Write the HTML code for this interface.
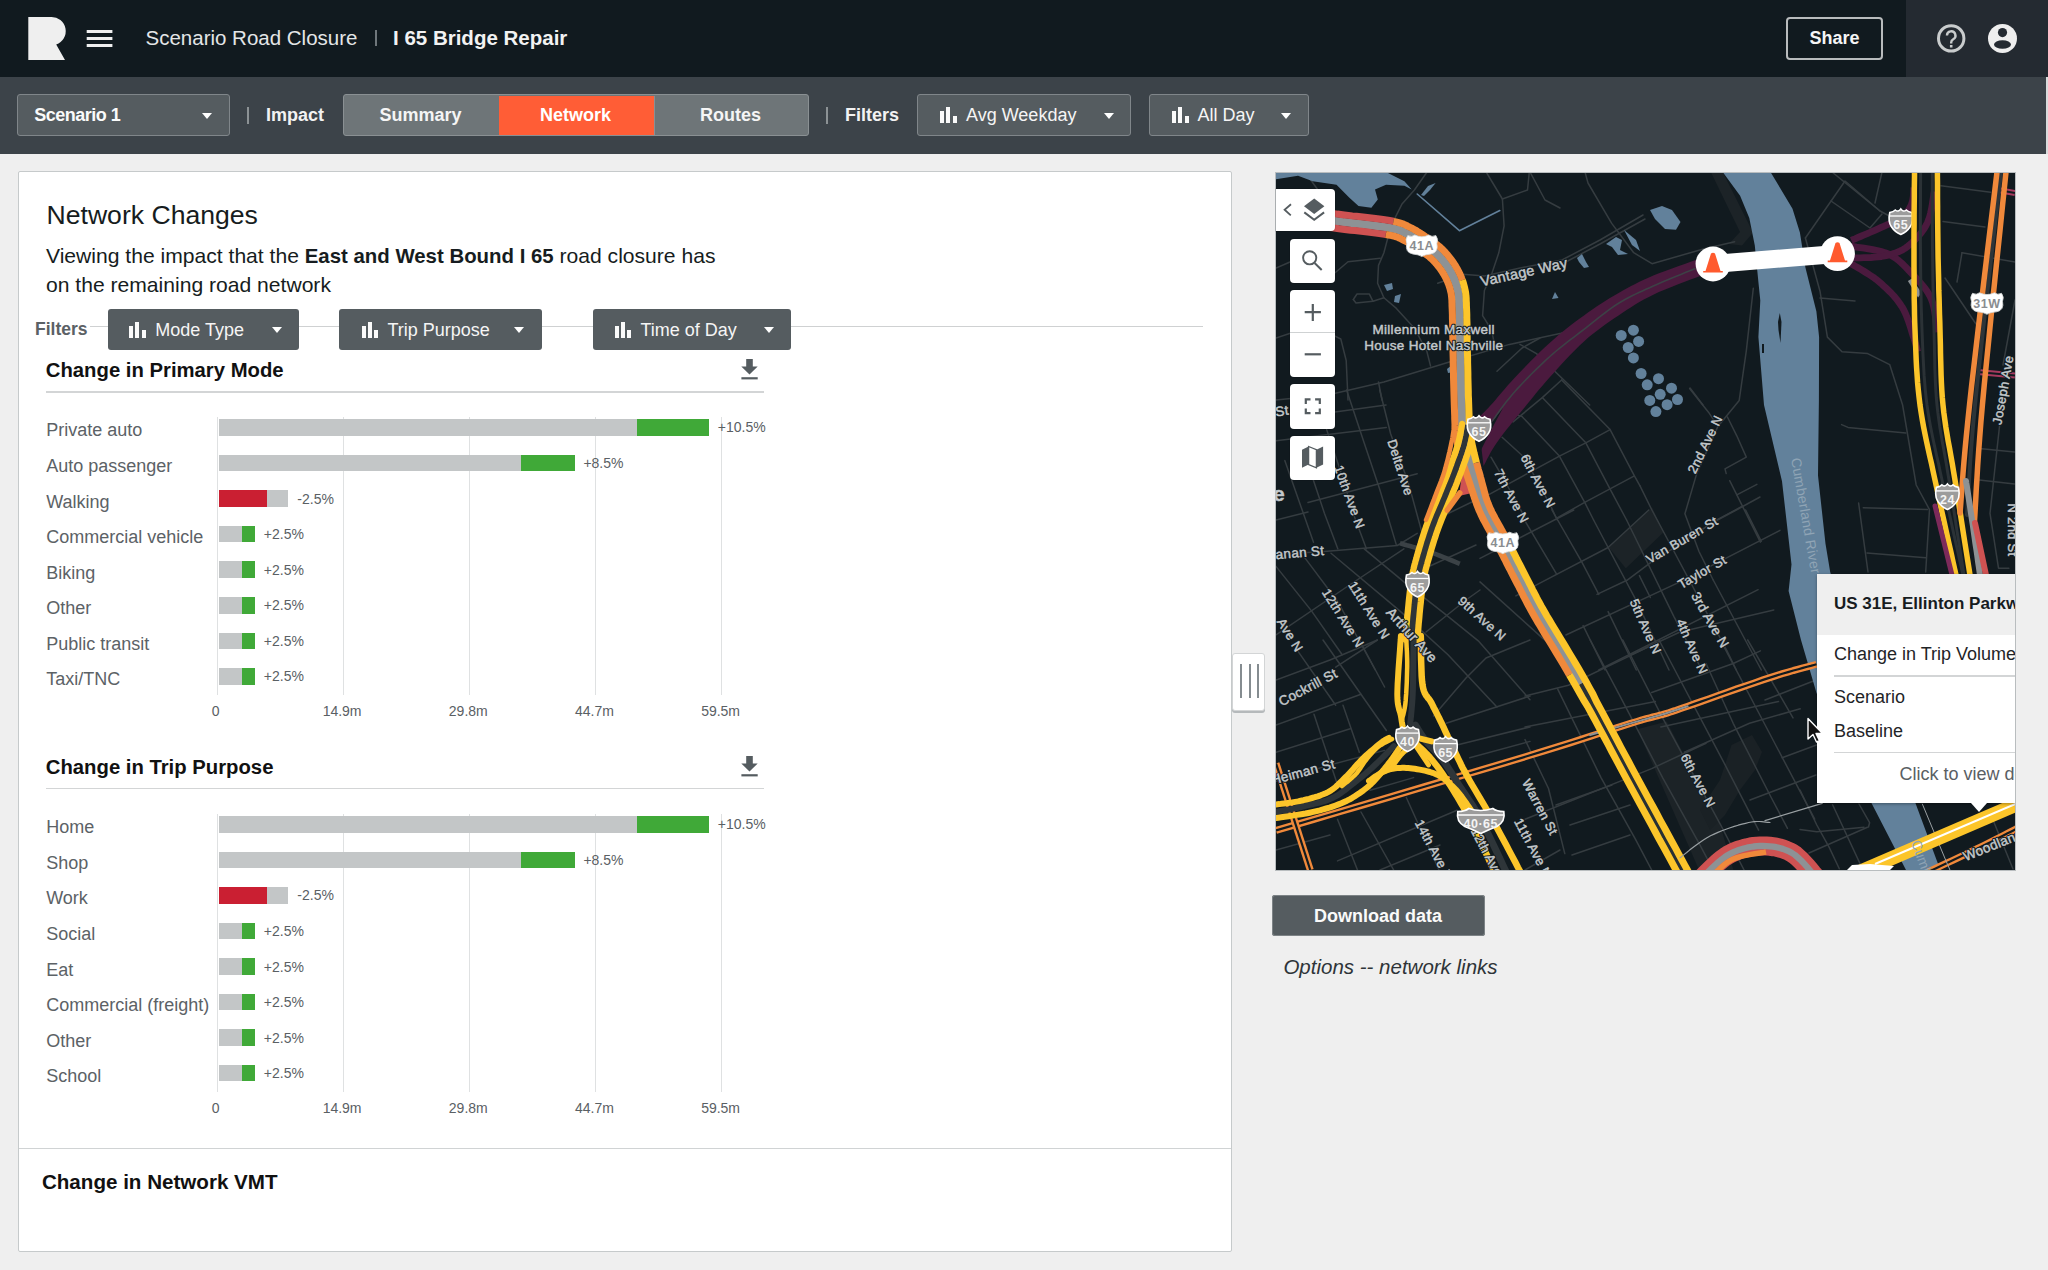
<!DOCTYPE html>
<html><head><meta charset="utf-8"><style>
html,body{margin:0;padding:0;}
body{width:2048px;height:1270px;overflow:hidden;background:#efefef;position:relative;font-family:"Liberation Sans", sans-serif;}
</style></head><body>
<div style="position:absolute;left:0.0px;top:0.0px;width:2048.0px;height:77.0px;background:#111a1f;"></div><div style="position:absolute;left:1906.0px;top:0.0px;width:142.0px;height:77.0px;background:#242a31;"></div><svg style="position:absolute;left:0;top:0" width="120" height="77"><path d="M28.3 17 H51 A14.2 14.2 0 0 1 56.2 44.6 L65 60 H28.3 Z" fill="#efefef"/><rect x="86.7" y="30" width="25.7" height="3" fill="#efefef"/><rect x="86.7" y="37" width="25.7" height="3" fill="#efefef"/><rect x="86.7" y="44" width="25.7" height="3" fill="#efefef"/></svg><div style="position:absolute;top:28.0px;font-size:20.5px;line-height:20.5px;color:#e4e6e7;font-weight:400;white-space:nowrap;left:145.5px;">Scenario Road Closure</div><div style="position:absolute;left:375.0px;top:30.0px;width:1.6px;height:16.0px;background:#6f777b;"></div><div style="position:absolute;top:28.0px;font-size:20.5px;line-height:20.5px;color:#f2f2f2;font-weight:700;white-space:nowrap;left:393.0px;">I 65 Bridge Repair</div><div style="position:absolute;left:1786.3px;top:17.0px;width:96.7px;height:42.8px;background:transparent;box-sizing:border-box;border:2px solid #b9bcbd;border-radius:4px;"></div><div style="position:absolute;top:29.3px;font-size:18px;line-height:18px;color:#f5f5f5;font-weight:700;white-space:nowrap;left:1534.6px;width:600px;text-align:center;">Share</div><svg style="position:absolute;left:1930;top:17px" width="100" height="44" viewBox="1930 17 100 44"><circle cx="1951.2" cy="38.4" r="12.7" fill="none" stroke="#c9cccd" stroke-width="3"/><g transform="translate(1951.2 39.2) scale(0.85) translate(-1951.2 -38.5)"><path d="M1946.2 34.2 A5 5 0 1 1 1953.6 38.6 Q1951.2 40 1951.2 42.5 V43.5" fill="none" stroke="#c9cccd" stroke-width="2.8"/><rect x="1949.7" y="45.3" width="3" height="3" fill="#c9cccd"/></g><circle cx="2002.5" cy="38.4" r="14.5" fill="#eeeeee"/><circle cx="2002.5" cy="32.55" r="4.6" fill="#242a31"/><ellipse cx="2002.5" cy="44.45" rx="8.5" ry="4.3" fill="#242a31"/></svg><div style="position:absolute;left:0.0px;top:77.0px;width:2048.0px;height:76.5px;background:#3c4349;"></div><div style="position:absolute;left:2046.3px;top:77.0px;width:1.7px;height:76.5px;background:#d9dbdc;"></div><div style="position:absolute;left:17.0px;top:94.0px;width:213.0px;height:42.2px;background:#555c60;box-sizing:border-box;border:1.5px solid #80868a;border-radius:3px;"></div><div style="position:absolute;top:106.1px;font-size:18px;line-height:18px;color:#fafafa;font-weight:700;white-space:nowrap;left:34.3px;letter-spacing:-0.5px;">Scenario 1</div><div style="position:absolute;left:201.7px;top:112.6px;width:0;height:0;border-left:5.75px solid transparent;border-right:5.75px solid transparent;border-top:6.2px solid #fff;"></div><div style="position:absolute;left:247.0px;top:106.7px;width:1.8px;height:17.0px;background:#8c9295;"></div><div style="position:absolute;top:106.1px;font-size:18px;line-height:18px;color:#f2f2f2;font-weight:700;white-space:nowrap;left:266.0px;">Impact</div><div style="position:absolute;left:342.7px;top:94.3px;width:466.3px;height:42.0px;background:#6e7578;box-sizing:border-box;border:1.5px solid #8a9093;border-radius:3px;"></div><div style="position:absolute;left:498.5px;top:95.5px;width:155.0px;height:39.6px;background:#ff5d36;"></div><div style="position:absolute;left:653.5px;top:95.5px;width:1.5px;height:39.6px;background:#8a9093;"></div><div style="position:absolute;top:106.3px;font-size:18px;line-height:18px;color:#f5f5f5;font-weight:700;white-space:nowrap;left:120.6px;width:600px;text-align:center;">Summary</div><div style="position:absolute;top:106.3px;font-size:18px;line-height:18px;color:#ffffff;font-weight:700;white-space:nowrap;left:275.6px;width:600px;text-align:center;">Network</div><div style="position:absolute;top:106.3px;font-size:18px;line-height:18px;color:#f5f5f5;font-weight:700;white-space:nowrap;left:430.6px;width:600px;text-align:center;">Routes</div><div style="position:absolute;left:826.0px;top:106.7px;width:1.8px;height:17.0px;background:#8c9295;"></div><div style="position:absolute;top:106.1px;font-size:18px;line-height:18px;color:#f2f2f2;font-weight:700;white-space:nowrap;left:845.0px;">Filters</div><div style="position:absolute;left:917.4px;top:94.3px;width:214.1px;height:42.0px;background:#555c60;box-sizing:border-box;border:1.5px solid #80868a;border-radius:3px;"></div><div style="position:absolute;left:940.0px;top:111.3px;width:4.0px;height:12.0px;background:#fafafa;"></div><div style="position:absolute;left:946.0px;top:107.3px;width:4.0px;height:16.0px;background:#fafafa;"></div><div style="position:absolute;left:952.5px;top:115.8px;width:4.0px;height:7.5px;background:#fafafa;"></div><div style="position:absolute;top:106.4px;font-size:18px;line-height:18px;color:#f5f5f5;font-weight:400;white-space:nowrap;left:966.0px;">Avg Weekday</div><div style="position:absolute;left:1103.5px;top:112.6px;width:0;height:0;border-left:5.75px solid transparent;border-right:5.75px solid transparent;border-top:6.2px solid #fff;"></div><div style="position:absolute;left:1149.3px;top:94.3px;width:160.0px;height:42.0px;background:#555c60;box-sizing:border-box;border:1.5px solid #80868a;border-radius:3px;"></div><div style="position:absolute;left:1172.0px;top:111.3px;width:4.0px;height:12.0px;background:#fafafa;"></div><div style="position:absolute;left:1178.0px;top:107.3px;width:4.0px;height:16.0px;background:#fafafa;"></div><div style="position:absolute;left:1184.5px;top:115.8px;width:4.0px;height:7.5px;background:#fafafa;"></div><div style="position:absolute;top:106.4px;font-size:18px;line-height:18px;color:#f5f5f5;font-weight:400;white-space:nowrap;left:1197.4px;">All Day</div><div style="position:absolute;left:1280.8px;top:112.6px;width:0;height:0;border-left:5.75px solid transparent;border-right:5.75px solid transparent;border-top:6.2px solid #fff;"></div><div style="position:absolute;left:17.5px;top:171.3px;width:1214.0px;height:1081.0px;background:#ffffff;box-sizing:border-box;border:1px solid #c6cacb;border-radius:2px;"></div><div style="position:absolute;top:202.1px;font-size:26.6px;line-height:26.6px;color:#161c20;font-weight:400;white-space:nowrap;left:46.5px;">Network Changes</div><div style="position:absolute;top:245.2px;font-size:21.1px;line-height:21.1px;color:#161c20;font-weight:400;white-space:nowrap;left:46.0px;">Viewing the impact that the <b style="font-size:20.4px">East and West Bound I 65</b> road closure has</div><div style="position:absolute;top:273.6px;font-size:21.1px;line-height:21.1px;color:#161c20;font-weight:400;white-space:nowrap;left:46.0px;">on the remaining road network</div><div style="position:absolute;left:90.0px;top:325.6px;width:1113.0px;height:1.5px;background:#cfd1d2;"></div><div style="position:absolute;top:320.8px;font-size:17.5px;line-height:17.5px;color:#5b6165;font-weight:700;white-space:nowrap;left:35.0px;">Filters</div><div style="position:absolute;left:107.6px;top:309.4px;width:191.4px;height:41.0px;background:#555c60;border-radius:3px;"></div><div style="position:absolute;left:129.0px;top:325.8px;width:4.0px;height:12.0px;background:#fafafa;"></div><div style="position:absolute;left:135.0px;top:321.8px;width:4.0px;height:16.0px;background:#fafafa;"></div><div style="position:absolute;left:141.5px;top:330.3px;width:4.0px;height:7.5px;background:#fafafa;"></div><div style="position:absolute;top:321.0px;font-size:18px;line-height:18px;color:#f5f5f5;font-weight:400;white-space:nowrap;left:155.3px;">Mode Type</div><div style="position:absolute;left:271.9px;top:327.0px;width:0;height:0;border-left:5.75px solid transparent;border-right:5.75px solid transparent;border-top:6.2px solid #fff;"></div><div style="position:absolute;left:339.0px;top:309.4px;width:203.4px;height:41.0px;background:#555c60;border-radius:3px;"></div><div style="position:absolute;left:361.5px;top:325.8px;width:4.0px;height:12.0px;background:#fafafa;"></div><div style="position:absolute;left:367.5px;top:321.8px;width:4.0px;height:16.0px;background:#fafafa;"></div><div style="position:absolute;left:374.0px;top:330.3px;width:4.0px;height:7.5px;background:#fafafa;"></div><div style="position:absolute;top:321.0px;font-size:18px;line-height:18px;color:#f5f5f5;font-weight:400;white-space:nowrap;left:387.5px;">Trip Purpose</div><div style="position:absolute;left:514.2px;top:327.0px;width:0;height:0;border-left:5.75px solid transparent;border-right:5.75px solid transparent;border-top:6.2px solid #fff;"></div><div style="position:absolute;left:592.5px;top:309.4px;width:198.9px;height:41.0px;background:#555c60;border-radius:3px;"></div><div style="position:absolute;left:614.5px;top:325.8px;width:4.0px;height:12.0px;background:#fafafa;"></div><div style="position:absolute;left:620.5px;top:321.8px;width:4.0px;height:16.0px;background:#fafafa;"></div><div style="position:absolute;left:627.0px;top:330.3px;width:4.0px;height:7.5px;background:#fafafa;"></div><div style="position:absolute;top:321.0px;font-size:18px;line-height:18px;color:#f5f5f5;font-weight:400;white-space:nowrap;left:640.5px;">Time of Day</div><div style="position:absolute;left:763.6px;top:327.0px;width:0;height:0;border-left:5.75px solid transparent;border-right:5.75px solid transparent;border-top:6.2px solid #fff;"></div><div style="position:absolute;top:359.9px;font-size:20.3px;line-height:20.3px;color:#111111;font-weight:700;white-space:nowrap;left:45.8px;">Change in Primary Mode</div><svg style="position:absolute;left:738px;top:355px" width="24" height="28" viewBox="738 355 24 28"><path d="M746.2 359 H752.8 V366.5 H757.7 L749.5 374.5 L741.3 366.5 H746.2 Z" fill="#555c60"/><rect x="741.4" y="377.2" width="16.3" height="2.2" fill="#555c60"/></svg><div style="position:absolute;left:45.6px;top:391.0px;width:718.4px;height:1.6px;background:#d3d5d6;"></div><div style="position:absolute;left:216.6px;top:416.6px;width:1.2px;height:278.0px;background:#dfe1e2;"></div><div style="position:absolute;left:342.7px;top:416.6px;width:1.2px;height:278.0px;background:#dfe1e2;"></div><div style="position:absolute;left:468.8px;top:416.6px;width:1.2px;height:278.0px;background:#dfe1e2;"></div><div style="position:absolute;left:594.9px;top:416.6px;width:1.2px;height:278.0px;background:#dfe1e2;"></div><div style="position:absolute;left:721.0px;top:416.6px;width:1.2px;height:278.0px;background:#dfe1e2;"></div><div style="position:absolute;top:704.3px;font-size:14px;line-height:14px;color:#5a6064;font-weight:400;white-space:nowrap;left:-84.3px;width:600px;text-align:center;">0</div><div style="position:absolute;top:704.3px;font-size:14px;line-height:14px;color:#5a6064;font-weight:400;white-space:nowrap;left:42.1px;width:600px;text-align:center;">14.9m</div><div style="position:absolute;top:704.3px;font-size:14px;line-height:14px;color:#5a6064;font-weight:400;white-space:nowrap;left:168.3px;width:600px;text-align:center;">29.8m</div><div style="position:absolute;top:704.3px;font-size:14px;line-height:14px;color:#5a6064;font-weight:400;white-space:nowrap;left:294.5px;width:600px;text-align:center;">44.7m</div><div style="position:absolute;top:704.3px;font-size:14px;line-height:14px;color:#5a6064;font-weight:400;white-space:nowrap;left:420.6px;width:600px;text-align:center;">59.5m</div><div style="position:absolute;top:421.4px;font-size:18px;line-height:18px;color:#5c6266;font-weight:400;white-space:nowrap;left:46.2px;">Private auto</div><div style="position:absolute;left:218.5px;top:419.2px;width:418.2px;height:16.6px;background:#c3c6c7;"></div><div style="position:absolute;left:636.7px;top:419.2px;width:72.3px;height:16.6px;background:#40a938;"></div><div style="position:absolute;top:420.4px;font-size:14px;line-height:14px;color:#5a6064;font-weight:400;white-space:nowrap;left:717.8px;">+10.5%</div><div style="position:absolute;top:456.9px;font-size:18px;line-height:18px;color:#5c6266;font-weight:400;white-space:nowrap;left:46.2px;">Auto passenger</div><div style="position:absolute;left:218.5px;top:454.8px;width:302.5px;height:16.6px;background:#c3c6c7;"></div><div style="position:absolute;left:521.0px;top:454.8px;width:53.5px;height:16.6px;background:#40a938;"></div><div style="position:absolute;top:456.0px;font-size:14px;line-height:14px;color:#5a6064;font-weight:400;white-space:nowrap;left:583.4px;">+8.5%</div><div style="position:absolute;top:492.5px;font-size:18px;line-height:18px;color:#5c6266;font-weight:400;white-space:nowrap;left:46.2px;">Walking</div><div style="position:absolute;left:218.5px;top:490.3px;width:48.3px;height:16.6px;background:#ca1f32;"></div><div style="position:absolute;left:266.8px;top:490.3px;width:21.6px;height:16.6px;background:#c3c6c7;"></div><div style="position:absolute;top:491.5px;font-size:14px;line-height:14px;color:#5a6064;font-weight:400;white-space:nowrap;left:297.3px;">-2.5%</div><div style="position:absolute;top:528.0px;font-size:18px;line-height:18px;color:#5c6266;font-weight:400;white-space:nowrap;left:46.2px;">Commercial vehicle</div><div style="position:absolute;left:218.5px;top:525.9px;width:23.7px;height:16.6px;background:#c3c6c7;"></div><div style="position:absolute;left:242.2px;top:525.9px;width:12.4px;height:16.6px;background:#40a938;"></div><div style="position:absolute;top:527.1px;font-size:14px;line-height:14px;color:#5a6064;font-weight:400;white-space:nowrap;left:263.8px;">+2.5%</div><div style="position:absolute;top:563.6px;font-size:18px;line-height:18px;color:#5c6266;font-weight:400;white-space:nowrap;left:46.2px;">Biking</div><div style="position:absolute;left:218.5px;top:561.4px;width:23.7px;height:16.6px;background:#c3c6c7;"></div><div style="position:absolute;left:242.2px;top:561.4px;width:12.4px;height:16.6px;background:#40a938;"></div><div style="position:absolute;top:562.6px;font-size:14px;line-height:14px;color:#5a6064;font-weight:400;white-space:nowrap;left:263.8px;">+2.5%</div><div style="position:absolute;top:599.1px;font-size:18px;line-height:18px;color:#5c6266;font-weight:400;white-space:nowrap;left:46.2px;">Other</div><div style="position:absolute;left:218.5px;top:597.0px;width:23.7px;height:16.6px;background:#c3c6c7;"></div><div style="position:absolute;left:242.2px;top:597.0px;width:12.4px;height:16.6px;background:#40a938;"></div><div style="position:absolute;top:598.2px;font-size:14px;line-height:14px;color:#5a6064;font-weight:400;white-space:nowrap;left:263.8px;">+2.5%</div><div style="position:absolute;top:634.7px;font-size:18px;line-height:18px;color:#5c6266;font-weight:400;white-space:nowrap;left:46.2px;">Public transit</div><div style="position:absolute;left:218.5px;top:632.5px;width:23.7px;height:16.6px;background:#c3c6c7;"></div><div style="position:absolute;left:242.2px;top:632.5px;width:12.4px;height:16.6px;background:#40a938;"></div><div style="position:absolute;top:633.7px;font-size:14px;line-height:14px;color:#5a6064;font-weight:400;white-space:nowrap;left:263.8px;">+2.5%</div><div style="position:absolute;top:670.2px;font-size:18px;line-height:18px;color:#5c6266;font-weight:400;white-space:nowrap;left:46.2px;">Taxi/TNC</div><div style="position:absolute;left:218.5px;top:668.0px;width:23.7px;height:16.6px;background:#c3c6c7;"></div><div style="position:absolute;left:242.2px;top:668.0px;width:12.4px;height:16.6px;background:#40a938;"></div><div style="position:absolute;top:669.3px;font-size:14px;line-height:14px;color:#5a6064;font-weight:400;white-space:nowrap;left:263.8px;">+2.5%</div><div style="position:absolute;top:756.8px;font-size:20.3px;line-height:20.3px;color:#111111;font-weight:700;white-space:nowrap;left:45.8px;">Change in Trip Purpose</div><svg style="position:absolute;left:738px;top:751.9px" width="24" height="28" viewBox="738 751.9 24 28"><path d="M746.2 755.9 H752.8 V763.4 H757.7 L749.5 771.4 L741.3 763.4 H746.2 Z" fill="#555c60"/><rect x="741.4" y="774.0999999999999" width="16.3" height="2.2" fill="#555c60"/></svg><div style="position:absolute;left:45.6px;top:787.9px;width:718.4px;height:1.6px;background:#d3d5d6;"></div><div style="position:absolute;left:216.6px;top:813.5px;width:1.2px;height:278.0px;background:#dfe1e2;"></div><div style="position:absolute;left:342.7px;top:813.5px;width:1.2px;height:278.0px;background:#dfe1e2;"></div><div style="position:absolute;left:468.8px;top:813.5px;width:1.2px;height:278.0px;background:#dfe1e2;"></div><div style="position:absolute;left:594.9px;top:813.5px;width:1.2px;height:278.0px;background:#dfe1e2;"></div><div style="position:absolute;left:721.0px;top:813.5px;width:1.2px;height:278.0px;background:#dfe1e2;"></div><div style="position:absolute;top:1101.2px;font-size:14px;line-height:14px;color:#5a6064;font-weight:400;white-space:nowrap;left:-84.3px;width:600px;text-align:center;">0</div><div style="position:absolute;top:1101.2px;font-size:14px;line-height:14px;color:#5a6064;font-weight:400;white-space:nowrap;left:42.1px;width:600px;text-align:center;">14.9m</div><div style="position:absolute;top:1101.2px;font-size:14px;line-height:14px;color:#5a6064;font-weight:400;white-space:nowrap;left:168.3px;width:600px;text-align:center;">29.8m</div><div style="position:absolute;top:1101.2px;font-size:14px;line-height:14px;color:#5a6064;font-weight:400;white-space:nowrap;left:294.5px;width:600px;text-align:center;">44.7m</div><div style="position:absolute;top:1101.2px;font-size:14px;line-height:14px;color:#5a6064;font-weight:400;white-space:nowrap;left:420.6px;width:600px;text-align:center;">59.5m</div><div style="position:absolute;top:818.3px;font-size:18px;line-height:18px;color:#5c6266;font-weight:400;white-space:nowrap;left:46.2px;">Home</div><div style="position:absolute;left:218.5px;top:816.1px;width:418.2px;height:16.6px;background:#c3c6c7;"></div><div style="position:absolute;left:636.7px;top:816.1px;width:72.3px;height:16.6px;background:#40a938;"></div><div style="position:absolute;top:817.3px;font-size:14px;line-height:14px;color:#5a6064;font-weight:400;white-space:nowrap;left:717.8px;">+10.5%</div><div style="position:absolute;top:853.8px;font-size:18px;line-height:18px;color:#5c6266;font-weight:400;white-space:nowrap;left:46.2px;">Shop</div><div style="position:absolute;left:218.5px;top:851.6px;width:302.5px;height:16.6px;background:#c3c6c7;"></div><div style="position:absolute;left:521.0px;top:851.6px;width:53.5px;height:16.6px;background:#40a938;"></div><div style="position:absolute;top:852.9px;font-size:14px;line-height:14px;color:#5a6064;font-weight:400;white-space:nowrap;left:583.4px;">+8.5%</div><div style="position:absolute;top:889.4px;font-size:18px;line-height:18px;color:#5c6266;font-weight:400;white-space:nowrap;left:46.2px;">Work</div><div style="position:absolute;left:218.5px;top:887.2px;width:48.3px;height:16.6px;background:#ca1f32;"></div><div style="position:absolute;left:266.8px;top:887.2px;width:21.6px;height:16.6px;background:#c3c6c7;"></div><div style="position:absolute;top:888.4px;font-size:14px;line-height:14px;color:#5a6064;font-weight:400;white-space:nowrap;left:297.3px;">-2.5%</div><div style="position:absolute;top:924.9px;font-size:18px;line-height:18px;color:#5c6266;font-weight:400;white-space:nowrap;left:46.2px;">Social</div><div style="position:absolute;left:218.5px;top:922.7px;width:23.7px;height:16.6px;background:#c3c6c7;"></div><div style="position:absolute;left:242.2px;top:922.7px;width:12.4px;height:16.6px;background:#40a938;"></div><div style="position:absolute;top:924.0px;font-size:14px;line-height:14px;color:#5a6064;font-weight:400;white-space:nowrap;left:263.8px;">+2.5%</div><div style="position:absolute;top:960.5px;font-size:18px;line-height:18px;color:#5c6266;font-weight:400;white-space:nowrap;left:46.2px;">Eat</div><div style="position:absolute;left:218.5px;top:958.3px;width:23.7px;height:16.6px;background:#c3c6c7;"></div><div style="position:absolute;left:242.2px;top:958.3px;width:12.4px;height:16.6px;background:#40a938;"></div><div style="position:absolute;top:959.5px;font-size:14px;line-height:14px;color:#5a6064;font-weight:400;white-space:nowrap;left:263.8px;">+2.5%</div><div style="position:absolute;top:996.0px;font-size:18px;line-height:18px;color:#5c6266;font-weight:400;white-space:nowrap;left:46.2px;">Commercial (freight)</div><div style="position:absolute;left:218.5px;top:993.8px;width:23.7px;height:16.6px;background:#c3c6c7;"></div><div style="position:absolute;left:242.2px;top:993.8px;width:12.4px;height:16.6px;background:#40a938;"></div><div style="position:absolute;top:995.1px;font-size:14px;line-height:14px;color:#5a6064;font-weight:400;white-space:nowrap;left:263.8px;">+2.5%</div><div style="position:absolute;top:1031.6px;font-size:18px;line-height:18px;color:#5c6266;font-weight:400;white-space:nowrap;left:46.2px;">Other</div><div style="position:absolute;left:218.5px;top:1029.4px;width:23.7px;height:16.6px;background:#c3c6c7;"></div><div style="position:absolute;left:242.2px;top:1029.4px;width:12.4px;height:16.6px;background:#40a938;"></div><div style="position:absolute;top:1030.6px;font-size:14px;line-height:14px;color:#5a6064;font-weight:400;white-space:nowrap;left:263.8px;">+2.5%</div><div style="position:absolute;top:1067.1px;font-size:18px;line-height:18px;color:#5c6266;font-weight:400;white-space:nowrap;left:46.2px;">School</div><div style="position:absolute;left:218.5px;top:1064.9px;width:23.7px;height:16.6px;background:#c3c6c7;"></div><div style="position:absolute;left:242.2px;top:1064.9px;width:12.4px;height:16.6px;background:#40a938;"></div><div style="position:absolute;top:1066.2px;font-size:14px;line-height:14px;color:#5a6064;font-weight:400;white-space:nowrap;left:263.8px;">+2.5%</div><div style="position:absolute;left:18.5px;top:1147.6px;width:1212.0px;height:1.5px;background:#d0d3d4;"></div><div style="position:absolute;top:1171.8px;font-size:20.6px;line-height:20.6px;color:#111111;font-weight:700;white-space:nowrap;left:41.9px;">Change in Network VMT</div><div style="position:absolute;left:1232.1px;top:652.9px;width:33.4px;height:58.6px;background:#ffffff;box-sizing:border-box;border:1px solid #d3d5d6;border-radius:3px;box-shadow:0 2px 0 #b5b9bb;"></div><div style="position:absolute;left:1240.0px;top:663.6px;width:2.0px;height:34.0px;background:#858c90;"></div><div style="position:absolute;left:1248.5px;top:663.6px;width:2.0px;height:34.0px;background:#858c90;"></div><div style="position:absolute;left:1257.0px;top:663.6px;width:2.0px;height:34.0px;background:#858c90;"></div><div style="position:absolute;left:1271.7px;top:895.2px;width:212.9px;height:41.0px;background:#555c60;border-radius:3px;box-shadow:0 0 0 1px #7d8386 inset;"></div><div style="position:absolute;top:907.3px;font-size:18px;line-height:18px;color:#fafafa;font-weight:700;white-space:nowrap;left:1078.1px;width:600px;text-align:center;">Download data</div><div style="position:absolute;top:956.9px;font-size:20.5px;line-height:20.5px;color:#2e3438;font-weight:400;white-space:nowrap;font-style:italic;left:1283.4px;">Options -- network links</div>
<svg style="position:absolute;left:1276px;top:172px" width="739" height="698" viewBox="1276 172 739 698"><rect x="1276" y="172" width="739" height="698" fill="#111a1f"/><g><path d="M1608.8 547.4 L1652.3 507.7 L1663.6 532.3 L1625.8 568.2Z" fill="#1c2327" /><path d="M1638.1 729.0 L1666.7 721.5 L1720.0 824.4 L1733.4 870.0 L1699.1 870.0 L1643.9 744.3Z" fill="#1c2327" /><path d="M1731.5 745.0 L1752.0 735.0 L1762.0 752.0 L1755.0 770.0 L1740.0 790.0 L1725.0 815.0 L1710.0 830.0 L1700.0 810.0 L1720.0 780.0Z" fill="#1a2125" /><path d="M1710.8 172.0 L1722.7 172.0 L1753.0 232.5 L1742.0 245.4 L1729.0 244.0 L1740.0 232.0Z" fill="#1c2327" /><path d="M1427.0 172.0 L1414.4 190.0 L1401.8 204.3 L1391.0 225.9 L1383.9 252.8 L1378.5 265.4 L1377.6 283.3 L1383.9 297.7 L1396.4 308.4 L1414.4 328.2 L1426.9 351.5 L1430.5 365.9" fill="none" stroke="#353c40" stroke-width="1.5" stroke-linejoin="round" stroke-linecap="round"/><path d="M1335.4 272.5 L1348.0 261.8 L1380.3 258.2" fill="none" stroke="#353c40" stroke-width="1.5" stroke-linejoin="round" stroke-linecap="round"/><path d="M1353.3 299.5 L1357.0 294.0 L1369.4 294.1 L1373.0 301.3 L1383.9 297.7" fill="none" stroke="#353c40" stroke-width="1.5" stroke-linejoin="round" stroke-linecap="round"/><path d="M1353.3 299.5 L1356.0 303.0 L1373.0 301.3" fill="none" stroke="#353c40" stroke-width="1.5" stroke-linejoin="round" stroke-linecap="round"/><path d="M1486.2 172.0 L1502.4 199.0 L1504.1 225.9 L1498.8 252.8 L1491.6 274.3 L1484.4 290.5 L1482.6 315.6 L1491.6 330.0 L1495.2 348.0" fill="none" stroke="#353c40" stroke-width="1.5" stroke-linejoin="round" stroke-linecap="round"/><path d="M1502.4 199.0 L1527.5 190.0 L1529.3 172.0" fill="none" stroke="#353c40" stroke-width="1.5" stroke-linejoin="round" stroke-linecap="round"/><path d="M1437.7 283.3 L1462.9 274.3 L1484.4 276.1 L1520.0 268.0 L1562.0 260.0 L1600.0 240.0 L1643.0 215.0" fill="none" stroke="#353c40" stroke-width="1.5" stroke-linejoin="round" stroke-linecap="round"/><path d="M1562.0 264.0 L1600.0 244.0 L1645.0 219.0" fill="none" stroke="#353c40" stroke-width="1.5" stroke-linejoin="round" stroke-linecap="round"/><path d="M1276.0 400.0 L1330.0 394.6 L1383.9 382.0 L1448.5 362.3 L1509.5 344.4 L1560.0 333.6 L1600.0 318.0" fill="none" stroke="#353c40" stroke-width="1.5" stroke-linejoin="round" stroke-linecap="round"/><path d="M1497.0 371.3 L1522.1 348.0 L1540.0 338.0" fill="none" stroke="#353c40" stroke-width="1.5" stroke-linejoin="round" stroke-linecap="round"/><path d="M1378.5 382.0 L1382.0 400.0" fill="none" stroke="#353c40" stroke-width="1.5" stroke-linejoin="round" stroke-linecap="round"/><path d="M1330.0 333.6 L1340.8 339.0 L1346.2 360.5 L1348.0 400.0" fill="none" stroke="#353c40" stroke-width="1.5" stroke-linejoin="round" stroke-linecap="round"/><path d="M1276.0 338.0 L1300.0 330.0 L1330.0 333.6" fill="none" stroke="#353c40" stroke-width="1.5" stroke-linejoin="round" stroke-linecap="round"/><path d="M1276.0 268.0 L1290.0 262.0 L1300.0 250.0" fill="none" stroke="#353c40" stroke-width="1.5" stroke-linejoin="round" stroke-linecap="round"/><path d="M1305.0 172.0 L1318.0 190.0" fill="none" stroke="#353c40" stroke-width="1.5" stroke-linejoin="round" stroke-linecap="round"/><path d="M1585.0 172.0 L1588.0 183.0 L1611.7 223.4 L1633.7 252.7 L1652.0 263.7 L1703.4 249.0 L1734.6 241.7" fill="none" stroke="#353c40" stroke-width="1.5" stroke-linejoin="round" stroke-linecap="round"/><path d="M1530.0 172.0 L1545.0 200.0 L1560.0 208.0" fill="none" stroke="#353c40" stroke-width="1.5" stroke-linejoin="round" stroke-linecap="round"/><path d="M1520.0 344.4 L1536.5 353.6 L1589.7 405.0" fill="none" stroke="#353c40" stroke-width="1.5" stroke-linejoin="round" stroke-linecap="round"/><path d="M1690.0 388.0 L1703.0 405.0" fill="none" stroke="#353c40" stroke-width="1.5" stroke-linejoin="round" stroke-linecap="round"/><path d="M1805.4 238.0 L1820.0 291.2 L1827.4 337.1 L1842.0 351.8 L1867.7 353.6 L1889.7 364.6 L1902.6 405.0 L1916.2 485.0 L1929.5 509.6 L1925.7 572.0" fill="none" stroke="#353c40" stroke-width="1.5" stroke-linejoin="round" stroke-linecap="round"/><path d="M1820.0 298.0 L1855.0 301.0" fill="none" stroke="#353c40" stroke-width="1.5" stroke-linejoin="round" stroke-linecap="round"/><path d="M1805.4 238.0 L1845.0 181.0 L1880.0 211.0 L1912.0 228.0" fill="none" stroke="#353c40" stroke-width="1.5" stroke-linejoin="round" stroke-linecap="round"/><path d="M1832.0 172.0 L1880.0 211.0" fill="none" stroke="#353c40" stroke-width="1.5" stroke-linejoin="round" stroke-linecap="round"/><path d="M1831.0 201.0 L1870.0 228.0 L1882.0 214.0" fill="none" stroke="#353c40" stroke-width="1.5" stroke-linejoin="round" stroke-linecap="round"/><path d="M1875.0 203.0 L1882.0 172.0" fill="none" stroke="#353c40" stroke-width="1.5" stroke-linejoin="round" stroke-linecap="round"/><path d="M1941.0 185.8 L1990.6 192.2" fill="none" stroke="#353c40" stroke-width="1.5" stroke-linejoin="round" stroke-linecap="round"/><path d="M1943.0 221.5 L1985.0 227.0" fill="none" stroke="#353c40" stroke-width="1.5" stroke-linejoin="round" stroke-linecap="round"/><path d="M1962.0 252.7 L1957.0 282.0" fill="none" stroke="#353c40" stroke-width="1.5" stroke-linejoin="round" stroke-linecap="round"/><path d="M1962.0 252.7 L2015.0 262.0" fill="none" stroke="#353c40" stroke-width="1.5" stroke-linejoin="round" stroke-linecap="round"/><path d="M1945.0 278.0 L1976.0 324.0" fill="none" stroke="#353c40" stroke-width="1.5" stroke-linejoin="round" stroke-linecap="round"/><path d="M2015.0 300.0 L2003.0 365.0" fill="none" stroke="#353c40" stroke-width="1.5" stroke-linejoin="round" stroke-linecap="round"/><path d="M1841.6 424.6 L1848.0 427.4 L1905.8 433.0" fill="none" stroke="#353c40" stroke-width="1.5" stroke-linejoin="round" stroke-linecap="round"/><path d="M1863.3 507.7 L1927.6 509.6" fill="none" stroke="#353c40" stroke-width="1.5" stroke-linejoin="round" stroke-linecap="round"/><path d="M1858.6 503.0 L1868.0 572.0" fill="none" stroke="#353c40" stroke-width="1.5" stroke-linejoin="round" stroke-linecap="round"/><path d="M1867.0 553.0 L1925.7 557.8" fill="none" stroke="#353c40" stroke-width="1.5" stroke-linejoin="round" stroke-linecap="round"/><path d="M2000.3 419.0 L1990.0 513.4 L1998.5 568.2 L2008.9 568.2" fill="none" stroke="#353c40" stroke-width="1.5" stroke-linejoin="round" stroke-linecap="round"/><path d="M1976.7 448.2 L2014.5 452.0" fill="none" stroke="#353c40" stroke-width="1.5" stroke-linejoin="round" stroke-linecap="round"/><path d="M1974.8 479.4 L2014.5 484.0" fill="none" stroke="#353c40" stroke-width="1.5" stroke-linejoin="round" stroke-linecap="round"/><path d="M1346.6 390.0 L1364.2 443.0 L1379.7 489.3 L1396.2 544.4" fill="none" stroke="#353c40" stroke-width="1.5" stroke-linejoin="round" stroke-linecap="round"/><path d="M1379.7 390.0 L1390.7 434.0 L1408.3 482.6 L1421.6 531.2" fill="none" stroke="#353c40" stroke-width="1.5" stroke-linejoin="round" stroke-linecap="round"/><path d="M1326.7 429.7 L1342.2 476.0 L1353.2 513.5 L1366.4 548.8" fill="none" stroke="#353c40" stroke-width="1.5" stroke-linejoin="round" stroke-linecap="round"/><path d="M1284.8 460.6 L1300.3 504.7 L1313.5 542.2" fill="none" stroke="#353c40" stroke-width="1.5" stroke-linejoin="round" stroke-linecap="round"/><path d="M1313.5 480.4 L1324.5 513.5 L1337.8 548.8" fill="none" stroke="#353c40" stroke-width="1.5" stroke-linejoin="round" stroke-linecap="round"/><path d="M1276.0 440.7 L1386.3 427.5" fill="none" stroke="#353c40" stroke-width="1.5" stroke-linejoin="round" stroke-linecap="round"/><path d="M1335.0 412.0 L1386.0 405.0" fill="none" stroke="#353c40" stroke-width="1.5" stroke-linejoin="round" stroke-linecap="round"/><path d="M1308.0 502.5 L1417.2 473.8" fill="none" stroke="#353c40" stroke-width="1.5" stroke-linejoin="round" stroke-linecap="round"/><path d="M1276.0 520.0 L1308.0 512.0" fill="none" stroke="#353c40" stroke-width="1.5" stroke-linejoin="round" stroke-linecap="round"/><path d="M1276.0 554.0 L1317.9 552.1 L1397.3 545.5 L1417.2 533.4" fill="none" stroke="#353c40" stroke-width="1.5" stroke-linejoin="round" stroke-linecap="round"/><path d="M1331.0 553.2 L1399.5 610.6 L1448.0 654.7 L1496.9 707.0" fill="none" stroke="#353c40" stroke-width="1.5" stroke-linejoin="round" stroke-linecap="round"/><path d="M1364.2 548.8 L1403.9 581.9 L1443.6 612.8 L1478.9 641.4 L1530.0 699.7" fill="none" stroke="#353c40" stroke-width="1.5" stroke-linejoin="round" stroke-linecap="round"/><path d="M1276.0 566.4 L1311.3 610.6 L1342.2 654.7" fill="none" stroke="#353c40" stroke-width="1.5" stroke-linejoin="round" stroke-linecap="round"/><path d="M1304.7 557.6 L1337.8 601.7 L1375.3 670.0" fill="none" stroke="#353c40" stroke-width="1.5" stroke-linejoin="round" stroke-linecap="round"/><path d="M1276.0 634.8 L1351.0 584.0 L1403.9 548.8" fill="none" stroke="#353c40" stroke-width="1.5" stroke-linejoin="round" stroke-linecap="round"/><path d="M1276.0 680.0 L1330.0 660.0 L1377.4 640.0" fill="none" stroke="#353c40" stroke-width="1.5" stroke-linejoin="round" stroke-linecap="round"/><path d="M1426.0 632.0 L1466.0 600.0 L1480.0 590.0" fill="none" stroke="#353c40" stroke-width="1.5" stroke-linejoin="round" stroke-linecap="round"/><path d="M1430.0 566.0 L1476.0 545.0" fill="none" stroke="#353c40" stroke-width="1.5" stroke-linejoin="round" stroke-linecap="round"/><path d="M1445.0 515.0 L1476.0 500.0" fill="none" stroke="#353c40" stroke-width="1.5" stroke-linejoin="round" stroke-linecap="round"/><path d="M1521.9 416.4 L1559.4 456.1 L1584.7 502.4 L1593.6 520.0" fill="none" stroke="#353c40" stroke-width="1.5" stroke-linejoin="round" stroke-linecap="round"/><path d="M1542.3 397.6 L1585.8 442.8 L1610.1 489.2 L1626.6 520.0" fill="none" stroke="#353c40" stroke-width="1.5" stroke-linejoin="round" stroke-linecap="round"/><path d="M1502.1 437.3 L1524.1 457.2 L1550.6 505.7 L1557.2 520.0" fill="none" stroke="#353c40" stroke-width="1.5" stroke-linejoin="round" stroke-linecap="round"/><path d="M1491.0 457.2 L1502.0 476.0 L1526.3 520.0" fill="none" stroke="#353c40" stroke-width="1.5" stroke-linejoin="round" stroke-linecap="round"/><path d="M1561.6 380.0 L1610.1 429.6 L1634.4 475.9 L1640.0 485.8" fill="none" stroke="#353c40" stroke-width="1.5" stroke-linejoin="round" stroke-linecap="round"/><path d="M1513.1 421.9 L1542.3 397.6 L1561.6 380.0" fill="none" stroke="#353c40" stroke-width="1.5" stroke-linejoin="round" stroke-linecap="round"/><path d="M1559.4 456.1 L1585.8 442.8 L1610.1 429.6" fill="none" stroke="#353c40" stroke-width="1.5" stroke-linejoin="round" stroke-linecap="round"/><path d="M1488.8 494.7 L1559.4 456.1" fill="none" stroke="#353c40" stroke-width="1.5" stroke-linejoin="round" stroke-linecap="round"/><path d="M1584.7 502.4 L1634.4 475.9" fill="none" stroke="#353c40" stroke-width="1.5" stroke-linejoin="round" stroke-linecap="round"/><path d="M1557.2 517.8 L1584.7 502.4" fill="none" stroke="#353c40" stroke-width="1.5" stroke-linejoin="round" stroke-linecap="round"/><path d="M1500.0 410.0 L1521.9 416.4" fill="none" stroke="#353c40" stroke-width="1.5" stroke-linejoin="round" stroke-linecap="round"/><path d="M1522.2 516.3 L1556.6 574.1" fill="none" stroke="#353c40" stroke-width="1.5" stroke-linejoin="round" stroke-linecap="round"/><path d="M1551.9 510.0 L1581.6 561.6 L1598.8 594.4" fill="none" stroke="#353c40" stroke-width="1.5" stroke-linejoin="round" stroke-linecap="round"/><path d="M1593.6 520.0 L1608.1 547.5 L1636.3 600.6 L1669.0 670.0" fill="none" stroke="#353c40" stroke-width="1.5" stroke-linejoin="round" stroke-linecap="round"/><path d="M1626.6 520.0 L1673.8 616.3 L1701.9 670.0" fill="none" stroke="#353c40" stroke-width="1.5" stroke-linejoin="round" stroke-linecap="round"/><path d="M1640.0 485.8 L1651.9 510.0 L1726.9 650.6 L1736.3 670.0" fill="none" stroke="#353c40" stroke-width="1.5" stroke-linejoin="round" stroke-linecap="round"/><path d="M1713.2 580.0 L1761.3 670.0" fill="none" stroke="#353c40" stroke-width="1.5" stroke-linejoin="round" stroke-linecap="round"/><path d="M1745.6 510.0 L1761.3 541.3" fill="none" stroke="#353c40" stroke-width="1.5" stroke-linejoin="round" stroke-linecap="round"/><path d="M1639.4 575.6 L1650.3 597.5" fill="none" stroke="#353c40" stroke-width="1.5" stroke-linejoin="round" stroke-linecap="round"/><path d="M1608.1 611.6 L1636.3 670.0" fill="none" stroke="#353c40" stroke-width="1.5" stroke-linejoin="round" stroke-linecap="round"/><path d="M1583.1 625.6 L1605.0 670.0" fill="none" stroke="#353c40" stroke-width="1.5" stroke-linejoin="round" stroke-linecap="round"/><path d="M1480.0 558.4 L1573.8 510.0" fill="none" stroke="#353c40" stroke-width="1.5" stroke-linejoin="round" stroke-linecap="round"/><path d="M1515.9 595.9 L1539.4 583.4 L1608.1 547.5 L1648.8 510.0" fill="none" stroke="#353c40" stroke-width="1.5" stroke-linejoin="round" stroke-linecap="round"/><path d="M1597.0 594.4 L1626.9 580.3 L1651.9 561.6" fill="none" stroke="#353c40" stroke-width="1.5" stroke-linejoin="round" stroke-linecap="round"/><path d="M1650.3 561.6 L1672.2 549.1 L1712.8 522.5 L1736.3 510.0 L1760.0 497.0" fill="none" stroke="#353c40" stroke-width="1.5" stroke-linejoin="round" stroke-linecap="round"/><path d="M1565.9 635.0 L1680.0 581.9 L1780.0 530.3" fill="none" stroke="#353c40" stroke-width="1.5" stroke-linejoin="round" stroke-linecap="round"/><path d="M1598.8 670.0 L1758.1 589.7" fill="none" stroke="#353c40" stroke-width="1.5" stroke-linejoin="round" stroke-linecap="round"/><path d="M1630.0 655.3 L1680.0 632.0 L1773.8 610.0" fill="none" stroke="#353c40" stroke-width="1.5" stroke-linejoin="round" stroke-linecap="round"/><path d="M1480.0 581.9 L1542.5 638.1 L1581.6 670.0" fill="none" stroke="#353c40" stroke-width="1.5" stroke-linejoin="round" stroke-linecap="round"/><path d="M1753.3 288.3 L1746.3 350.8 L1739.2 400.4 L1717.9 426.4 L1696.7 473.6 L1684.9 513.8 L1699.0 551.5 L1713.2 580.0" fill="none" stroke="#353c40" stroke-width="1.5" stroke-linejoin="round" stroke-linecap="round"/><path d="M1689.6 388.6 L1708.5 412.2 L1717.9 426.4" fill="none" stroke="#353c40" stroke-width="1.5" stroke-linejoin="round" stroke-linecap="round"/><path d="M1727.4 417.0 L1736.8 435.8 L1746.3 457.1 L1725.0 468.9 L1726.2 473.6" fill="none" stroke="#353c40" stroke-width="1.5" stroke-linejoin="round" stroke-linecap="round"/><path d="M1729.7 480.7 L1760.4 542.1" fill="none" stroke="#353c40" stroke-width="1.5" stroke-linejoin="round" stroke-linecap="round"/><path d="M1736.8 494.9 L1756.9 484.3" fill="none" stroke="#353c40" stroke-width="1.5" stroke-linejoin="round" stroke-linecap="round"/><path d="M1710.8 523.2 L1741.5 506.7" fill="none" stroke="#353c40" stroke-width="1.5" stroke-linejoin="round" stroke-linecap="round"/><path d="M1323.0 640.0 L1377.4 717.8 L1386.4 730.5" fill="none" stroke="#353c40" stroke-width="1.5" stroke-linejoin="round" stroke-linecap="round"/><path d="M1297.7 650.9 L1335.7 705.2" fill="none" stroke="#353c40" stroke-width="1.5" stroke-linejoin="round" stroke-linecap="round"/><path d="M1359.3 640.0 L1384.6 687.0" fill="none" stroke="#353c40" stroke-width="1.5" stroke-linejoin="round" stroke-linecap="round"/><path d="M1276.0 725.0 L1361.0 694.3" fill="none" stroke="#353c40" stroke-width="1.5" stroke-linejoin="round" stroke-linecap="round"/><path d="M1335.7 667.2 L1377.4 640.0" fill="none" stroke="#353c40" stroke-width="1.5" stroke-linejoin="round" stroke-linecap="round"/><path d="M1314.0 714.2 L1323.0 741.4 L1337.5 784.8" fill="none" stroke="#353c40" stroke-width="1.5" stroke-linejoin="round" stroke-linecap="round"/><path d="M1343.0 705.2 L1359.3 752.2" fill="none" stroke="#353c40" stroke-width="1.5" stroke-linejoin="round" stroke-linecap="round"/><path d="M1276.0 752.2 L1350.2 728.7" fill="none" stroke="#353c40" stroke-width="1.5" stroke-linejoin="round" stroke-linecap="round"/><path d="M1276.0 781.2 L1330.3 764.9 L1384.6 750.4" fill="none" stroke="#353c40" stroke-width="1.5" stroke-linejoin="round" stroke-linecap="round"/><path d="M1370.1 790.3 L1413.6 777.6" fill="none" stroke="#353c40" stroke-width="1.5" stroke-linejoin="round" stroke-linecap="round"/><path d="M1446.2 723.3 L1530.0 696.1" fill="none" stroke="#353c40" stroke-width="1.5" stroke-linejoin="round" stroke-linecap="round"/><path d="M1457.0 745.0 L1530.0 726.9" fill="none" stroke="#353c40" stroke-width="1.5" stroke-linejoin="round" stroke-linecap="round"/><path d="M1469.7 757.7 L1530.0 741.4" fill="none" stroke="#353c40" stroke-width="1.5" stroke-linejoin="round" stroke-linecap="round"/><path d="M1433.5 716.0 L1466.0 678.0 L1486.0 658.0 L1530.0 640.0" fill="none" stroke="#353c40" stroke-width="1.5" stroke-linejoin="round" stroke-linecap="round"/><path d="M1337.5 860.9 L1457.0 810.2" fill="none" stroke="#353c40" stroke-width="1.5" stroke-linejoin="round" stroke-linecap="round"/><path d="M1361.0 812.0 L1393.7 870.0" fill="none" stroke="#353c40" stroke-width="1.5" stroke-linejoin="round" stroke-linecap="round"/><path d="M1337.5 819.2 L1357.5 870.0" fill="none" stroke="#353c40" stroke-width="1.5" stroke-linejoin="round" stroke-linecap="round"/><path d="M1406.3 797.5 L1439.0 870.0" fill="none" stroke="#353c40" stroke-width="1.5" stroke-linejoin="round" stroke-linecap="round"/><path d="M1276.0 850.0 L1330.0 835.0" fill="none" stroke="#353c40" stroke-width="1.5" stroke-linejoin="round" stroke-linecap="round"/><path d="M1380.0 870.0 L1440.0 845.0" fill="none" stroke="#353c40" stroke-width="1.5" stroke-linejoin="round" stroke-linecap="round"/><path d="M1590.2 640.0 L1619.1 694.3 L1662.6 777.6 L1698.8 842.8 L1713.3 870.0" fill="none" stroke="#353c40" stroke-width="1.5" stroke-linejoin="round" stroke-linecap="round"/><path d="M1622.8 640.0 L1662.6 717.9 L1720.5 824.7 L1744.1 870.0" fill="none" stroke="#353c40" stroke-width="1.5" stroke-linejoin="round" stroke-linecap="round"/><path d="M1659.0 640.0 L1724.2 763.1 L1758.6 830.1" fill="none" stroke="#353c40" stroke-width="1.5" stroke-linejoin="round" stroke-linecap="round"/><path d="M1706.0 663.5 L1733.2 723.3 L1771.2 797.5 L1787.5 828.3" fill="none" stroke="#353c40" stroke-width="1.5" stroke-linejoin="round" stroke-linecap="round"/><path d="M1724.2 647.2 L1760.4 716.0 L1814.7 819.2" fill="none" stroke="#353c40" stroke-width="1.5" stroke-linejoin="round" stroke-linecap="round"/><path d="M1747.7 640.0 L1793.0 717.9" fill="none" stroke="#353c40" stroke-width="1.5" stroke-linejoin="round" stroke-linecap="round"/><path d="M1557.6 688.9 L1601.0 777.6 L1635.4 839.2 L1651.7 870.0" fill="none" stroke="#353c40" stroke-width="1.5" stroke-linejoin="round" stroke-linecap="round"/><path d="M1525.0 739.6 L1548.5 788.5 L1564.8 853.6" fill="none" stroke="#353c40" stroke-width="1.5" stroke-linejoin="round" stroke-linecap="round"/><path d="M1525.0 696.1 L1568.5 685.3 L1651.7 645.4" fill="none" stroke="#353c40" stroke-width="1.5" stroke-linejoin="round" stroke-linecap="round"/><path d="M1525.0 726.9 L1655.4 701.6" fill="none" stroke="#353c40" stroke-width="1.5" stroke-linejoin="round" stroke-linecap="round"/><path d="M1651.7 692.5 L1733.2 663.5 L1760.4 650.9" fill="none" stroke="#353c40" stroke-width="1.5" stroke-linejoin="round" stroke-linecap="round"/><path d="M1660.8 726.9 L1778.5 701.6" fill="none" stroke="#353c40" stroke-width="1.5" stroke-linejoin="round" stroke-linecap="round"/><path d="M1684.3 752.3 L1749.5 723.3 L1800.2 708.8" fill="none" stroke="#353c40" stroke-width="1.5" stroke-linejoin="round" stroke-linecap="round"/><path d="M1525.0 819.2 L1651.7 768.6 L1706.0 743.2" fill="none" stroke="#353c40" stroke-width="1.5" stroke-linejoin="round" stroke-linecap="round"/><path d="M1556.0 805.0 L1612.0 785.0" fill="none" stroke="#353c40" stroke-width="1.5" stroke-linejoin="round" stroke-linecap="round"/><path d="M1570.0 825.0 L1630.0 805.0" fill="none" stroke="#353c40" stroke-width="1.5" stroke-linejoin="round" stroke-linecap="round"/><path d="M1572.0 855.0 L1630.0 835.0" fill="none" stroke="#353c40" stroke-width="1.5" stroke-linejoin="round" stroke-linecap="round"/><path d="M1782.1 757.7 L1816.5 745.0" fill="none" stroke="#353c40" stroke-width="1.5" stroke-linejoin="round" stroke-linecap="round"/><path d="M1750.0 800.0 L1816.0 775.0" fill="none" stroke="#353c40" stroke-width="1.5" stroke-linejoin="round" stroke-linecap="round"/><path d="M1765.0 700.0 L1816.0 680.0" fill="none" stroke="#353c40" stroke-width="1.5" stroke-linejoin="round" stroke-linecap="round"/><path d="M1525.0 870.0 L1560.0 850.0" fill="none" stroke="#353c40" stroke-width="1.5" stroke-linejoin="round" stroke-linecap="round"/><path d="M1800.0 790.0 L1816.8 825.0 L1829.2 847.4 L1839.3 868.7" fill="none" stroke="#353c40" stroke-width="1.5" stroke-linejoin="round" stroke-linecap="round"/><path d="M1832.6 804.7 L1862.9 869.8" fill="none" stroke="#353c40" stroke-width="1.5" stroke-linejoin="round" stroke-linecap="round"/><path d="M1800.0 829.4 L1816.8 831.7 L1864.0 827.2" fill="none" stroke="#353c40" stroke-width="1.5" stroke-linejoin="round" stroke-linecap="round"/><path d="M1809.0 853.0 L1867.4 827.2" fill="none" stroke="#353c40" stroke-width="1.5" stroke-linejoin="round" stroke-linecap="round"/><path d="M1859.0 804.0 L1869.6 822.7 L1868.5 827.0" fill="none" stroke="#353c40" stroke-width="1.5" stroke-linejoin="round" stroke-linecap="round"/><path d="M1991.0 815.0 L2013.0 869.0" fill="none" stroke="#353c40" stroke-width="1.5" stroke-linejoin="round" stroke-linecap="round"/></g><path d="M1722.7 172.0 L1740.1 195.8 L1749.3 217.9 L1754.8 245.4 L1758.4 282.0 L1760.3 300.4 L1758.4 337.0 L1764.0 405.0 L1782.0 481.3 L1791.5 564.5 L1788.6 591.0 L1801.0 640.0 L1816.5 692.9 L1845.0 750.0 L1871.7 803.4 L1906.0 870.0 L1940.3 870.0 L1915.6 803.4 L1880.0 720.0 L1850.0 640.0 L1830.2 572.0 L1825.5 543.7 L1818.0 475.6 L1818.9 400.0 L1819.1 337.1 L1816.4 311.4 L1805.4 267.4 L1799.9 232.5 L1792.5 208.7 L1770.5 172.0Z" fill="#62819b" /><path d="M1276.0 172.0 L1276.0 179.3 L1298.0 175.7 L1312.7 181.2 L1336.5 184.8 L1349.4 197.7 L1358.5 205.9 L1371.4 207.8 L1377.8 199.5 L1375.0 189.4 L1386.0 184.8 L1404.4 185.8 L1411.7 189.4 L1404.4 181.2 L1393.4 175.7 L1386.0 172.0Z" fill="#62819b" /><path d="M1779.8 313.0 L1781.5 322.0 L1780.5 343.0 L1778.5 330.0 L1778.0 322.0Z" fill="#111a1f" /><path d="M1762.0 344.0 L1764.0 344.0 L1764.0 353.0 L1762.0 353.0Z" fill="#111a1f" /><path d="M1650.0 210.0 L1662.0 206.0 L1672.0 210.0 L1680.5 222.0 L1676.0 229.8 L1665.0 229.0 L1655.0 219.0Z" fill="#62819b" /><path d="M1421.0 195.0 L1428.0 186.0 L1435.6 183.0 L1430.0 190.0 L1424.0 196.0Z" fill="#62819b" /><path d="M1417.2 194.0 L1459.4 230.7 L1499.8 210.5" fill="none" stroke="#62819b" stroke-width="1.6" stroke-linecap="round" stroke-linejoin="round" /><path d="M1384.0 285.0 L1392.0 283.0 L1393.0 289.0 L1387.0 291.0Z" fill="#62819b" /><path d="M1395.0 296.0 L1401.0 294.0 L1399.0 303.0 L1394.0 302.0Z" fill="#62819b" /><path d="M1447.0 369.0 L1452.0 365.0 L1454.0 372.0 L1448.0 373.0Z" fill="#62819b" /><path d="M1577.0 258.0 L1582.0 254.0 L1586.0 262.0 L1589.0 267.0 L1584.0 268.0 L1579.0 262.0Z" fill="#62819b" /><path d="M1606.0 244.0 L1616.0 237.0 L1622.0 240.0 L1620.0 250.0 L1628.0 254.0 L1618.0 255.0 L1612.0 247.0Z" fill="#62819b" /><path d="M1624.0 230.0 L1636.0 240.0 L1640.0 251.0 L1632.0 245.0Z" fill="#62819b" /><path d="M1552.0 299.0 L1555.0 292.0 L1558.5 298.0Z" fill="#62819b" /><circle cx="1621.2" cy="335.4" r="5.5" fill="#62819b"/><circle cx="1633.4" cy="330.2" r="5.5" fill="#62819b"/><circle cx="1638.6" cy="341.4" r="5.5" fill="#62819b"/><circle cx="1628.2" cy="347.5" r="5.5" fill="#62819b"/><circle cx="1633.4" cy="357.9" r="5.5" fill="#62819b"/><circle cx="1641.1" cy="373.5" r="5.5" fill="#62819b"/><circle cx="1658.5" cy="378.7" r="5.5" fill="#62819b"/><circle cx="1647.2" cy="384.8" r="5.5" fill="#62819b"/><circle cx="1671.5" cy="388.2" r="5.5" fill="#62819b"/><circle cx="1660.2" cy="394.3" r="5.5" fill="#62819b"/><circle cx="1677.5" cy="399.5" r="5.5" fill="#62819b"/><circle cx="1649.8" cy="400.4" r="5.5" fill="#62819b"/><circle cx="1667.1" cy="404.7" r="5.5" fill="#62819b"/><circle cx="1655.9" cy="411.6" r="5.5" fill="#62819b"/><path d="M1276.0 830.5 L1291.5 825.9 L1312.3 819.8 L1337.2 812.5 L1365.0 804.3 L1394.5 795.6 L1424.5 786.7 L1453.8 778.0 L1481.3 769.9 L1505.8 762.6 L1526.0 756.5 L1542.7 751.4 L1557.3 746.9 L1570.3 742.8 L1581.6 739.2 L1591.7 735.9 L1600.7 733.0 L1608.9 730.3 L1616.4 727.9 L1623.5 725.6 L1630.5 723.4 L1636.8 721.5 L1642.0 719.9 L1646.3 718.7 L1649.8 717.8 L1652.8 717.0 L1655.3 716.4 L1657.6 715.8 L1659.8 715.2 L1662.1 714.6 L1664.8 713.8 L1667.3 713.1 L1669.2 712.5 L1670.6 712.0 L1671.9 711.6 L1673.2 711.2 L1674.8 710.7 L1676.8 710.0 L1679.5 709.0 L1683.1 707.8 L1687.7 706.2 L1693.7 704.1 L1700.9 701.6 L1709.2 698.7 L1718.1 695.5 L1727.4 692.3 L1736.8 688.9 L1746.1 685.7 L1754.9 682.7 L1763.0 679.9 L1770.0 677.6 L1776.3 675.6 L1782.3 673.7 L1788.0 672.1 L1793.4 670.5 L1798.4 669.2 L1803.0 667.9 L1807.1 666.8 L1810.7 665.9 L1813.9 665.0 L1816.5 664.3" fill="none" stroke="#f0893b" stroke-width="7.0" stroke-linejoin="round"/><path d="M1276.0 830.5 L1291.5 825.9 L1312.3 819.8 L1337.2 812.5 L1365.0 804.3 L1394.5 795.6 L1424.5 786.7 L1453.8 778.0 L1481.3 769.9 L1505.8 762.6 L1526.0 756.5 L1542.7 751.4 L1557.3 746.9 L1570.3 742.8 L1581.6 739.2 L1591.7 735.9 L1600.7 733.0 L1608.9 730.3 L1616.4 727.9 L1623.5 725.6 L1630.5 723.4 L1636.8 721.5 L1642.0 719.9 L1646.3 718.7 L1649.8 717.8 L1652.8 717.0 L1655.3 716.4 L1657.6 715.8 L1659.8 715.2 L1662.1 714.6 L1664.8 713.8 L1667.3 713.1 L1669.2 712.5 L1670.6 712.0 L1671.9 711.6 L1673.2 711.2 L1674.8 710.7 L1676.8 710.0 L1679.5 709.0 L1683.1 707.8 L1687.7 706.2 L1693.7 704.1 L1700.9 701.6 L1709.2 698.7 L1718.1 695.5 L1727.4 692.3 L1736.8 688.9 L1746.1 685.7 L1754.9 682.7 L1763.0 679.9 L1770.0 677.6 L1776.3 675.6 L1782.3 673.7 L1788.0 672.1 L1793.4 670.5 L1798.4 669.2 L1803.0 667.9 L1807.1 666.8 L1810.7 665.9 L1813.9 665.0 L1816.5 664.3" fill="none" stroke="#111a1f" stroke-width="2.2" stroke-linejoin="round"/><path d="M1590.0 735.0 L1630.5 723.4 L1664.8 713.8 L1687.7 706.2" fill="none" stroke="#8d9295" stroke-width="2.0" stroke-linecap="round" stroke-linejoin="round" /><path d="M1276.0 763.4 L1310.3 870.0" fill="none" stroke="#f0893b" stroke-width="7.0" stroke-linejoin="round"/><path d="M1276.0 763.4 L1310.3 870.0" fill="none" stroke="#111a1f" stroke-width="2.2" stroke-linejoin="round"/><path d="M1928.0 872.0 L1931.3 870.4 L1935.6 868.4 L1940.8 865.9 L1946.6 863.2 L1952.8 860.3 L1959.1 857.3 L1965.4 854.3 L1971.5 851.4 L1977.1 848.7 L1982.0 846.3 L1986.5 844.1 L1990.9 841.9 L1995.3 839.7 L1999.4 837.6 L2003.4 835.5 L2007.1 833.6 L2010.4 831.9 L2013.4 830.4 L2015.9 829.1 L2018.0 828.0" fill="none" stroke="#f0893b" stroke-width="7.0" stroke-linejoin="round"/><path d="M1928.0 872.0 L1931.3 870.4 L1935.6 868.4 L1940.8 865.9 L1946.6 863.2 L1952.8 860.3 L1959.1 857.3 L1965.4 854.3 L1971.5 851.4 L1977.1 848.7 L1982.0 846.3 L1986.5 844.1 L1990.9 841.9 L1995.3 839.7 L1999.4 837.6 L2003.4 835.5 L2007.1 833.6 L2010.4 831.9 L2013.4 830.4 L2015.9 829.1 L2018.0 828.0" fill="none" stroke="#111a1f" stroke-width="2.2" stroke-linejoin="round"/><path d="M1978.0 372.0 L2015.0 375.6" fill="none" stroke="#a63a5e" stroke-width="6" stroke-linejoin="round"/><path d="M1978.0 372.0 L2015.0 375.6" fill="none" stroke="#111a1f" stroke-width="2" stroke-linejoin="round"/><path d="M1998.0 190.0 L2015.0 193.0" fill="none" stroke="#a63a5e" stroke-width="6" stroke-linejoin="round"/><path d="M1998.0 190.0 L2015.0 193.0" fill="none" stroke="#111a1f" stroke-width="2" stroke-linejoin="round"/><path d="M1463.0 466.0 L1476.0 463.0 L1482.0 478.0 L1472.0 493.0 L1459.0 496.0Z" fill="#cf5252" /><path d="M1276.0 213.0 L1276.9 213.1 L1278.1 213.3 L1279.3 213.4 L1280.7 213.6 L1282.3 213.8 L1284.0 214.0 L1285.7 214.2 L1287.6 214.4 L1289.5 214.6 L1291.5 214.9 L1293.6 215.2 L1295.7 215.4 L1297.8 215.7 L1300.0 216.0 L1302.2 216.3 L1304.4 216.6 L1306.7 216.9 L1309.0 217.3 L1311.4 217.6 L1313.9 218.0 L1316.4 218.4 L1319.0 218.8 L1321.7 219.1 L1324.5 219.5 L1327.3 219.9 L1330.3 220.4 L1333.3 220.8 L1336.5 221.2 L1339.9 221.6 L1343.5 222.1 L1347.4 222.5 L1351.5 223.0 L1355.7 223.5 L1360.0 224.0 L1364.2 224.5 L1368.5 225.0 L1372.6 225.5 L1376.6 226.0 L1380.3 226.5 L1383.8 226.9 L1386.9 227.4 L1389.7 227.9 L1392.1 228.4 L1394.2 228.8 L1396.0 229.3 L1397.6 229.7 L1399.0 230.1 L1400.2 230.6 L1401.3 231.0 L1402.2 231.4 L1403.2 231.9 L1404.1 232.4 L1404.9 232.8 L1405.9 233.3 L1406.9 233.9 L1408.0 234.4 L1409.2 235.0 L1410.3 235.5 L1411.4 236.1 L1412.5 236.8 L1413.5 237.4 L1414.6 238.0 L1415.6 238.7 L1416.6 239.3 L1417.6 240.0 L1418.6 240.7 L1419.6 241.4 L1420.6 242.1 L1421.7 242.8 L1422.7 243.5 L1423.8 244.2 L1424.8 244.9 L1425.9 245.6 L1427.0 246.3 L1428.0 247.1 L1429.1 247.8 L1430.2 248.5 L1431.2 249.3 L1432.3 250.1 L1433.3 250.9 L1434.4 251.7 L1435.4 252.6 L1436.4 253.5 L1437.4 254.5 L1438.4 255.5 L1439.4 256.6 L1440.4 257.6 L1441.4 258.8 L1442.3 259.9 L1443.3 261.1 L1444.3 262.3 L1445.2 263.5 L1446.1 264.7 L1447.0 266.0 L1447.8 267.2 L1448.7 268.5 L1449.5 269.7 L1450.2 271.0 L1450.9 272.3 L1451.6 273.5 L1452.2 274.8 L1452.9 276.1 L1453.5 277.4 L1454.0 278.7 L1454.6 280.0 L1455.1 281.3 L1455.6 282.6 L1456.1 284.0 L1456.5 285.3 L1456.9 286.7 L1457.3 288.0 L1457.6 289.4 L1457.9 290.7 L1458.2 292.0 L1458.4 293.1 L1458.5 294.3 L1458.7 295.4 L1458.8 296.6 L1458.9 297.8 L1459.0 299.1 L1459.1 300.4 L1459.1 301.9 L1459.2 303.5 L1459.2 305.4 L1459.3 307.4 L1459.4 309.6 L1459.5 312.1 L1459.6 314.8 L1459.6 317.7 L1459.7 320.7 L1459.8 323.9 L1459.8 327.2 L1459.9 330.7 L1459.9 334.2 L1460.0 337.7 L1460.0 341.3 L1460.1 344.9 L1460.2 348.4 L1460.2 352.0 L1460.3 355.4 L1460.4 358.9 L1460.4 362.4 L1460.5 366.0 L1460.6 369.7 L1460.7 373.4 L1460.7 377.2 L1460.8 380.9 L1460.9 384.6 L1461.0 388.2 L1461.1 391.8 L1461.2 395.3 L1461.3 398.6 L1461.4 401.9 L1461.5 405.0 L1461.6 407.9 L1461.7 410.7 L1461.8 413.3 L1461.9 415.9 L1461.9 418.3 L1462.0 420.7 L1462.1 423.0 L1462.2 425.3 L1462.4 427.6 L1462.6 429.9 L1462.8 432.3 L1463.2 434.8 L1463.5 437.3 L1464.0 440.0 L1464.6 442.8 L1465.2 445.7 L1465.9 448.8 L1466.7 451.9 L1467.6 455.0 L1468.5 458.2 L1469.4 461.4 L1470.3 464.5 L1471.2 467.7 L1472.2 470.7 L1473.1 473.7 L1474.0 476.6 L1474.8 479.3 L1475.6 481.9 L1476.3 484.3 L1477.0 486.6 L1477.6 488.8 L1478.2 490.9 L1478.8 492.9 L1479.4 494.8 L1480.0 496.7 L1480.6 498.5 L1481.2 500.4 L1481.8 502.3 L1482.5 504.1 L1483.3 506.1 L1484.1 508.1 L1485.0 510.2 L1486.0 512.3 L1487.0 514.5 L1488.1 516.7 L1489.2 518.8 L1490.4 521.0 L1491.6 523.2 L1492.8 525.4 L1494.1 527.7 L1495.4 530.0 L1496.7 532.3 L1498.0 534.6 L1499.3 537.0 L1500.7 539.5 L1502.0 542.0 L1503.3 544.6 L1504.7 547.2 L1506.1 550.0 L1507.6 552.8 L1509.0 555.6 L1510.5 558.5 L1511.9 561.4 L1513.4 564.3 L1514.9 567.1 L1516.3 570.0 L1517.8 572.8 L1519.2 575.6 L1520.6 578.4 L1522.0 581.0 L1523.3 583.5 L1524.5 585.8 L1525.6 588.0 L1526.6 590.1 L1527.6 592.1 L1528.6 594.1 L1529.7 596.1 L1530.8 598.2 L1532.0 600.5 L1533.2 602.9 L1534.7 605.5 L1536.2 608.3 L1538.0 611.5 L1540.0 615.0 L1542.2 618.8 L1544.5 622.7 L1547.0 626.9 L1549.6 631.2 L1552.4 635.7 L1555.2 640.4 L1558.2 645.2 L1561.2 650.3 L1564.4 655.5 L1567.6 660.9 L1570.9 666.4 L1574.2 672.1 L1577.6 678.0 L1581.0 684.0" fill="none" stroke="#8d9295" stroke-width="8" stroke-linecap="butt" stroke-linejoin="round"/><path d="M1581.0 684.0 L1584.5 690.3 L1588.2 696.9 L1592.0 703.9 L1595.9 711.1 L1599.9 718.5 L1603.9 726.0 L1608.0 733.7 L1612.1 741.4 L1616.2 749.1 L1620.3 756.8 L1624.4 764.3 L1628.3 771.8 L1632.2 779.0 L1636.0 786.0 L1639.8 793.0 L1643.7 800.3 L1647.8 807.7 L1651.9 815.2 L1656.0 822.7 L1660.0 830.1 L1663.9 837.4 L1667.7 844.4 L1671.4 851.0 L1674.7 857.2 L1677.8 862.9 L1680.6 868.0 L1683.0 872.4 L1685.0 876.0" fill="none" stroke="#283034" stroke-width="8" stroke-linecap="butt" stroke-linejoin="round"/><path d="M1276.0 213.0 L1276.9 213.1 L1278.1 213.3 L1279.3 213.4 L1280.7 213.6 L1282.3 213.8 L1284.0 214.0 L1285.7 214.2 L1287.6 214.4 L1289.5 214.6 L1291.5 214.9 L1293.6 215.2 L1295.7 215.4 L1297.8 215.7 L1300.0 216.0 L1302.2 216.3 L1304.4 216.6 L1306.7 216.9 L1309.0 217.3 L1311.4 217.6 L1313.9 218.0 L1316.4 218.4 L1319.0 218.8 L1321.7 219.1 L1324.5 219.5 L1327.3 219.9 L1330.3 220.4 L1333.3 220.8 L1336.5 221.2 L1339.9 221.6 L1343.5 222.1 L1347.4 222.5 L1351.5 223.0 L1355.7 223.5 L1360.0 224.0 L1364.2 224.5 L1368.5 225.0 L1372.6 225.5 L1376.6 226.0 L1380.3 226.5 L1383.8 226.9 L1386.9 227.4 L1389.7 227.9 L1392.1 228.4 L1394.2 228.8 L1396.0 229.3 L1397.6 229.7 L1399.0 230.1 L1400.2 230.6 L1401.3 231.0 L1402.2 231.4 L1403.2 231.9 L1404.1 232.4 L1404.9 232.8 L1405.9 233.3 L1406.9 233.9 L1408.0 234.4 L1409.2 235.0 L1410.3 235.5 L1411.4 236.1 L1412.5 236.8 L1413.5 237.4 L1414.6 238.0 L1415.6 238.7 L1416.6 239.3 L1417.6 240.0 L1418.6 240.7 L1419.6 241.4 L1420.6 242.1 L1421.7 242.8 L1422.7 243.5 L1423.8 244.2 L1424.8 244.9 L1425.9 245.6 L1427.0 246.3 L1428.0 247.1 L1429.1 247.8 L1430.2 248.5 L1431.2 249.3 L1432.3 250.1 L1433.3 250.9 L1434.4 251.7 L1435.4 252.6 L1436.4 253.5 L1437.4 254.5 L1438.4 255.5 L1439.4 256.6 L1440.4 257.6 L1441.4 258.8 L1442.3 259.9 L1443.3 261.1 L1444.3 262.3 L1445.2 263.5 L1446.1 264.7 L1447.0 266.0 L1447.8 267.2 L1448.7 268.5 L1449.5 269.7 L1450.2 271.0 L1450.9 272.3 L1451.6 273.5 L1452.2 274.8 L1452.9 276.1 L1453.5 277.4 L1454.0 278.7 L1454.6 280.0 L1455.1 281.3 L1455.6 282.6 L1456.1 284.0 L1456.5 285.3 L1456.9 286.7 L1457.3 288.0 L1457.6 289.4 L1457.9 290.7 L1458.2 292.0 L1458.4 293.1 L1458.5 294.3 L1458.7 295.4 L1458.8 296.6 L1458.9 297.8 L1459.0 299.1 L1459.1 300.4 L1459.1 301.9 L1459.2 303.5 L1459.2 305.4 L1459.3 307.4 L1459.4 309.6 L1459.5 312.1 L1459.6 314.8 L1459.6 317.7 L1459.7 320.7 L1459.8 323.9 L1459.8 327.2 L1459.9 330.7 L1459.9 334.2 L1460.0 337.7 L1460.0 341.3 L1460.1 344.9 L1460.2 348.4 L1460.2 352.0 L1460.3 355.4 L1460.4 358.9 L1460.4 362.4 L1460.5 366.0 L1460.6 369.7 L1460.7 373.4 L1460.7 377.2 L1460.8 380.9 L1460.9 384.6 L1461.0 388.2 L1461.1 391.8 L1461.2 395.3 L1461.3 398.6 L1461.4 401.9 L1461.5 405.0 L1461.6 407.9 L1461.7 410.7 L1461.8 413.3 L1461.9 415.9 L1461.9 418.3 L1462.0 420.7 L1462.1 423.0 L1462.2 425.3 L1462.4 427.6 L1462.6 429.9 L1462.8 432.3 L1463.2 434.8 L1463.5 437.3 L1464.0 440.0 L1464.6 442.8 L1465.2 445.7 L1465.9 448.8 L1466.7 451.9 L1467.6 455.0 L1468.5 458.2 L1469.4 461.4 L1470.3 464.5 L1471.2 467.7 L1472.2 470.7 L1473.1 473.7 L1474.0 476.6 L1474.8 479.3 L1475.6 481.9 L1476.3 484.3 L1477.0 486.6 L1477.6 488.8 L1478.2 490.9 L1478.8 492.9 L1479.4 494.8 L1480.0 496.7 L1480.6 498.5 L1481.2 500.4 L1481.8 502.3 L1482.5 504.1 L1483.3 506.1 L1484.1 508.1 L1485.0 510.2 L1486.0 512.3 L1487.0 514.5 L1488.1 516.7 L1489.2 518.8 L1490.4 521.0 L1491.6 523.2 L1492.8 525.4 L1494.1 527.7 L1495.4 530.0 L1496.7 532.3 L1498.0 534.6 L1499.3 537.0 L1500.7 539.5 L1502.0 542.0 L1503.3 544.6 L1504.7 547.2 L1506.1 550.0 L1507.6 552.8 L1509.0 555.6 L1510.5 558.5 L1511.9 561.4 L1513.4 564.3 L1514.9 567.1 L1516.3 570.0 L1517.8 572.8 L1519.2 575.6 L1520.6 578.4 L1522.0 581.0 L1523.3 583.5 L1524.5 585.8 L1525.6 588.0 L1526.6 590.1 L1527.6 592.1 L1528.6 594.1 L1529.7 596.1 L1530.8 598.2 L1532.0 600.5 L1533.2 602.9 L1534.7 605.5 L1536.2 608.3 L1538.0 611.5 L1540.0 615.0 L1542.2 618.8 L1544.5 622.7 L1547.0 626.9 L1549.6 631.2 L1552.4 635.7 L1555.2 640.4 L1558.2 645.2 L1561.2 650.3 L1564.4 655.5 L1567.6 660.9 L1570.9 666.4 L1574.2 672.1 L1577.6 678.0 L1581.0 684.0" fill="none" stroke="#8d9295" stroke-width="7" stroke-linecap="butt" stroke-linejoin="round"/><path d="M1581.0 684.0 L1584.5 690.3 L1588.2 696.9 L1592.0 703.9 L1595.9 711.1 L1599.9 718.5 L1603.9 726.0 L1608.0 733.7 L1612.1 741.4 L1616.2 749.1 L1620.3 756.8 L1624.4 764.3 L1628.3 771.8 L1632.2 779.0 L1636.0 786.0 L1639.8 793.0 L1643.7 800.3 L1647.8 807.7 L1651.9 815.2 L1656.0 822.7 L1660.0 830.1 L1663.9 837.4 L1667.7 844.4 L1671.4 851.0 L1674.7 857.2 L1677.8 862.9 L1680.6 868.0 L1683.0 872.4 L1685.0 876.0" fill="none" stroke="#283034" stroke-width="7" stroke-linecap="butt" stroke-linejoin="round"/><path d="M1276.9 205.9 L1277.8 206.0 L1278.9 206.1 L1280.2 206.3 L1281.6 206.4 L1283.1 206.6 L1284.8 206.8 L1286.6 207.0 L1288.5 207.3 L1290.4 207.5 L1292.4 207.8 L1294.5 208.0 L1296.6 208.3 L1298.8 208.6 L1301.0 208.9 L1303.2 209.2 L1305.4 209.5 L1307.7 209.8 L1310.1 210.2 L1312.5 210.5 L1314.9 210.9 L1317.5 211.2 L1320.1 211.6 L1322.8 212.0 L1325.5 212.4 L1328.4 212.8 L1331.3 213.2 L1334.3 213.6 L1337.4 214.1 L1340.8 214.5 L1344.4 214.9 L1348.3 215.4 L1352.3 215.9 L1356.5 216.3 L1360.8 216.8 L1365.1 217.3 L1369.3 217.8 L1373.5 218.3 L1377.5 218.8 L1381.3 219.3 L1384.8 219.8 L1388.1 220.3 L1391.0 220.8 L1393.5 221.3" fill="none" stroke="#cf5252" stroke-width="7" stroke-linecap="butt" stroke-linejoin="round"/><path d="M1393.5 221.3 L1395.8 221.8 L1397.8 222.3 L1399.6 222.8 L1401.2 223.3 L1402.7 223.8 L1404.1 224.4 L1405.3 224.9 L1406.4 225.5 L1407.4 226.0 L1408.3 226.5 L1409.2 227.0 L1410.1 227.4 L1411.2 227.9 L1412.4 228.5 L1413.7 229.2 L1414.9 229.9 L1416.1 230.5 L1417.2 231.2 L1418.4 231.9 L1419.5 232.6 L1420.6 233.3 L1421.6 234.0 L1422.7 234.7 L1423.7 235.4 L1424.7 236.1 L1425.7 236.9 L1426.8 237.6 L1427.8 238.2 L1428.8 238.9 L1429.9 239.6 L1431.0 240.4 L1432.1 241.1 L1433.2 241.9 L1434.3 242.7 L1435.5 243.5 L1436.6 244.4 L1437.8 245.3 L1439.0 246.2 L1440.2 247.2 L1441.3 248.3 L1442.5 249.4 L1443.6 250.5 L1444.7 251.7 L1445.7 252.8 L1446.8 254.0 L1447.9 255.3 L1448.9 256.6 L1449.9 257.9 L1450.9 259.2 L1451.9 260.5 L1452.9 261.9 L1453.8 263.2 L1454.7 264.6 L1455.6 266.0 L1456.4 267.4 L1457.2 268.8 L1458.0 270.2 L1458.7 271.6 L1459.4 273.0 L1460.0 274.4 L1460.7 275.8 L1461.3 277.3 L1461.8 278.7 L1462.4 280.2" fill="none" stroke="#f0893b" stroke-width="7" stroke-linecap="butt" stroke-linejoin="round"/><path d="M1462.4 280.2 L1462.9 281.7 L1463.4 283.2 L1463.8 284.7 L1464.2 286.2 L1464.6 287.7 L1464.9 289.2 L1465.2 290.6 L1465.5 292.0 L1465.7 293.3 L1465.8 294.6 L1466.0 295.9 L1466.1 297.3 L1466.2 298.7 L1466.2 300.1 L1466.3 301.6 L1466.4 303.3 L1466.4 305.1 L1466.5 307.1 L1466.6 309.3 L1466.7 311.8 L1466.8 314.6 L1466.8 317.5 L1466.9 320.6 L1467.0 323.8 L1467.0 327.1 L1467.1 330.6 L1467.1 334.1 L1467.2 337.6 L1467.2 341.2 L1467.3 344.8 L1467.4 348.3 L1467.4 351.8 L1467.5 355.2 L1467.6 358.7 L1467.6 362.3 L1467.7 365.9 L1467.8 369.6 L1467.9 373.3 L1467.9 377.0 L1468.0 380.7 L1468.1 384.4 L1468.2 388.0 L1468.3 391.6 L1468.3 395.1 L1468.5 398.4 L1468.6 401.6 L1468.7 404.7 L1468.8 407.7 L1468.9 410.5 L1469.0 413.1 L1469.1 415.7 L1469.1 418.1 L1469.2 420.4 L1469.3 422.6 L1469.4 424.8 L1469.6 427.0 L1469.8 429.2 L1470.0 431.5 L1470.3 433.8 L1470.6 436.2 L1471.1 438.7 L1471.5 441.4 L1472.1 444.2 L1472.7 447.1 L1473.4 450.1 L1474.1 453.2 L1474.9 456.4 L1475.7 459.5 L1476.5 462.7" fill="none" stroke="#fcc52a" stroke-width="7" stroke-linecap="butt" stroke-linejoin="round"/><path d="M1476.5 462.7 L1477.4 465.8 L1478.2 468.9 L1479.1 471.9 L1479.9 474.8 L1480.6 477.5 L1481.4 480.2 L1482.0 482.7 L1482.6 485.0 L1483.2 487.2 L1483.8 489.3 L1484.3 491.3 L1484.8 493.2 L1485.3 495.0 L1485.8 496.8 L1486.4 498.6 L1487.0 500.4 L1487.7 502.2 L1488.4 504.1 L1489.2 506.0 L1490.0 508.0 L1491.0 510.0 L1491.9 512.1 L1493.0 514.1 L1494.1 516.2 L1495.2 518.4 L1496.4 520.5 L1497.6 522.7 L1498.9 525.0 L1500.2 527.3 L1501.5 529.6 L1502.8 532.0 L1504.2 534.4" fill="none" stroke="#f0893b" stroke-width="7" stroke-linecap="butt" stroke-linejoin="round"/><path d="M1504.2 534.4 L1505.5 536.9 L1506.9 539.4 L1508.2 542.0 L1509.6 544.7 L1511.0 547.5 L1512.5 550.3 L1513.9 553.1 L1515.4 556.0 L1516.8 558.9 L1518.3 561.8 L1519.8 564.6 L1521.2 567.5 L1522.7 570.3 L1524.1 573.1 L1525.5 575.8 L1526.9 578.5 L1528.2 581.0 L1529.4 583.3 L1530.5 585.5 L1531.5 587.6 L1532.5 589.6 L1533.6 591.6 L1534.6 593.6 L1535.7 595.7 L1536.8 597.9 L1538.1 600.3 L1539.5 602.8 L1541.0 605.7 L1542.8 608.8 L1544.8 612.3 L1546.9 616.0 L1549.3 619.9 L1551.7 624.0 L1554.3 628.3 L1557.1 632.8 L1559.9 637.5 L1562.9 642.4 L1565.9 647.4 L1569.1 652.7 L1572.3 658.0 L1575.6 663.6 L1579.0 669.3 L1582.4 675.2 L1585.8 681.3 L1589.3 687.6 L1593.0 694.3 L1596.4 701.5 L1600.3 708.7 L1604.3 716.1 L1608.3 723.7 L1612.4 731.3 L1616.5 739.0 L1620.6 746.8 L1624.7 754.4 L1628.8 762.0 L1632.7 769.4 L1636.6 776.6 L1640.4 783.6 L1644.2 790.6 L1648.1 797.9 L1652.2 805.3 L1656.3 812.8 L1660.3 820.3 L1664.4 827.7 L1668.3 835.0 L1672.1 842.0 L1675.8 848.6 L1679.1 854.8 L1682.2 860.5 L1685.0 865.6 L1687.4 870.0 L1689.4 873.6" fill="none" stroke="#fcc52a" stroke-width="7" stroke-linecap="butt" stroke-linejoin="round"/><path d="M1275.1 220.1 L1276.1 220.3 L1277.2 220.4 L1278.5 220.6 L1279.9 220.7 L1281.4 220.9 L1283.1 221.1 L1284.8 221.3 L1286.7 221.5 L1288.6 221.8 L1290.6 222.0 L1292.7 222.3 L1294.8 222.6 L1296.9 222.8 L1299.0 223.1 L1301.2 223.4 L1303.4 223.7 L1305.7 224.1 L1308.0 224.4 L1310.4 224.8 L1312.8 225.1 L1315.4 225.5 L1318.0 225.9 L1320.7 226.3 L1323.5 226.7 L1326.3 227.1 L1329.3 227.5 L1332.4 227.9 L1335.6 228.3 L1339.0 228.8 L1342.7 229.2 L1346.6 229.7 L1350.7 230.2 L1354.9 230.6 L1359.1 231.1 L1363.4 231.6 L1367.6 232.1 L1371.7 232.6 L1375.6 233.1 L1379.3 233.6 L1382.7 234.1 L1385.8 234.5" fill="none" stroke="#cf5252" stroke-width="7" stroke-linecap="butt" stroke-linejoin="round"/><path d="M1385.8 234.5 L1388.4 235.0 L1390.6 235.4 L1392.6 235.8 L1394.2 236.2 L1395.5 236.6 L1396.7 237.0 L1397.6 237.3 L1398.4 237.6 L1399.2 238.0 L1399.9 238.3 L1400.7 238.7 L1401.6 239.2 L1402.5 239.7 L1403.7 240.3 L1404.8 240.9 L1405.9 241.4 L1406.9 241.9 L1407.9 242.4 L1408.8 243.0 L1409.8 243.5 L1410.7 244.1 L1411.7 244.7 L1412.6 245.3 L1413.6 246.0 L1414.6 246.6 L1415.5 247.3 L1416.5 248.0 L1417.6 248.7 L1418.6 249.4 L1419.7 250.2 L1420.8 250.9 L1421.9 251.6 L1423.0 252.3 L1424.0 253.0 L1425.0 253.7 L1426.0 254.4 L1427.0 255.1 L1427.9 255.8 L1428.9 256.5 L1429.8 257.3 L1430.6 258.0 L1431.5 258.8 L1432.3 259.6 L1433.2 260.5 L1434.1 261.5 L1435.0 262.4 L1435.9 263.5 L1436.8 264.5 L1437.7 265.6 L1438.6 266.7 L1439.4 267.8 L1440.3 269.0 L1441.1 270.1 L1441.9 271.2 L1442.6 272.4 L1443.3 273.5 L1444.0 274.6 L1444.6 275.7 L1445.2 276.9 L1445.8 278.0 L1446.4 279.2 L1446.9 280.3 L1447.4 281.5 L1447.9 282.7 L1448.4 283.8 L1448.8 285.0 L1449.2 286.2 L1449.6 287.4 L1450.0 288.6 L1450.3 289.8 L1450.6 291.1 L1450.9 292.3 L1451.1 293.3 L1451.3 294.3 L1451.4 295.3 L1451.5 296.2 L1451.6 297.2 L1451.7 298.3 L1451.8 299.5 L1451.9 300.7 L1451.9 302.2 L1452.0 303.8 L1452.0 305.6 L1452.1 307.6 L1452.2 309.9 L1452.3 312.3 L1452.4 315.0 L1452.4 317.8 L1452.5 320.9 L1452.6 324.0 L1452.6 327.4 L1452.7 330.8 L1452.7 334.3 L1452.8 337.8 L1452.8 341.4 L1452.9 345.0 L1453.0 348.6 L1453.0 352.1 L1453.1 355.6 L1453.2 359.0 L1453.2 362.6 L1453.3 366.2 L1453.4 369.9 L1453.5 373.6 L1453.5 377.3 L1453.6 381.0 L1453.7 384.7 L1453.8 388.4 L1453.9 392.0 L1454.0 395.5 L1454.1 398.9 L1454.2 402.2 L1454.3 405.3 L1454.4 408.2 L1454.5 410.9 L1454.6 413.5 L1454.7 416.1 L1454.7 418.5 L1454.8 420.9 L1454.9 423.3 L1455.0 425.7 L1455.2 428.1 L1455.4 430.6 L1455.7 433.1 L1456.0 435.8 L1456.4 438.5 L1456.9 441.3 L1457.6 444.3 L1458.3 447.3 L1459.2 450.4 L1460.1 453.6 L1461.0 456.8 L1462.0 460.0 L1463.0 463.2 L1464.1 466.4 L1465.1 469.5 L1466.1 472.6 L1467.1 475.5 L1468.1 478.4 L1469.0 481.1 L1469.8 483.6 L1470.6 486.0 L1471.3 488.3 L1472.0 490.4 L1472.7 492.5 L1473.3 494.5 L1474.0 496.4 L1474.6 498.4 L1475.3 500.3 L1476.0 502.2 L1476.6 504.1 L1477.4 506.1 L1478.2 508.1 L1479.0 510.2 L1480.0 512.4 L1481.0 514.7 L1482.1 516.9 L1483.2 519.2 L1484.4 521.4 L1485.6 523.6 L1486.8 525.9 L1488.0 528.1 L1489.3 530.4 L1490.6 532.7 L1491.9 535.0 L1493.2 537.3 L1494.5 539.7 L1495.8 542.1 L1497.1 544.6 L1498.5 547.1 L1499.8 549.8 L1501.2 552.5 L1502.7 555.3 L1504.1 558.1 L1505.6 561.0 L1507.0 563.9 L1508.5 566.8 L1510.0 569.6 L1511.4 572.5 L1512.9 575.4 L1514.3 578.1 L1515.7 580.9 L1517.1 583.5 L1518.4 586.0 L1519.6 588.3 L1520.7 590.5 L1521.7 592.5 L1522.7 594.6 L1523.7 596.6 L1524.8 598.6 L1525.9 600.8 L1527.1 603.1 L1528.4 605.5 L1529.8 608.1 L1531.4 611.0 L1533.2 614.2 L1535.2 617.7 L1537.4 621.6 L1539.8 625.5 L1542.3 629.7 L1544.9 634.1 L1547.7 638.6 L1550.5 643.3 L1553.5 648.1 L1556.5 653.1 L1559.7 658.3 L1562.9 663.7 L1566.1 669.2 L1569.4 674.9" fill="none" stroke="#f0893b" stroke-width="7" stroke-linecap="butt" stroke-linejoin="round"/><path d="M1569.4 674.9 L1572.8 680.7 L1576.2 686.7 L1579.7 693.0 L1583.4 699.6 L1587.6 706.3 L1591.5 713.5 L1595.5 720.9 L1599.5 728.4 L1603.6 736.0 L1607.7 743.7 L1611.8 751.5 L1615.9 759.1 L1619.9 766.7 L1623.9 774.1 L1627.8 781.4 L1631.6 788.4 L1635.4 795.4 L1639.3 802.7 L1643.4 810.1 L1647.5 817.6 L1651.6 825.1 L1655.6 832.5 L1659.5 839.8 L1663.4 846.7 L1667.0 853.4 L1670.4 859.6 L1673.5 865.3 L1676.2 870.4 L1678.6 874.8 L1680.6 878.4" fill="none" stroke="#fcc52a" stroke-width="7" stroke-linecap="butt" stroke-linejoin="round"/><path d="M1400.0 543.3 L1401.8 543.8 L1404.1 544.4 L1406.8 545.2 L1409.8 546.0 L1413.1 546.9 L1416.6 547.9 L1420.1 548.9 L1423.5 549.9 L1426.9 551.0 L1430.0 552.0 L1433.1 553.1 L1436.4 554.4 L1439.9 555.7 L1443.4 557.1 L1446.8 558.4 L1450.0 559.8 L1453.1 561.0 L1455.8 562.1 L1458.0 563.1 L1459.8 563.8" fill="none" stroke="#3b4246" stroke-width="4.7" stroke-linecap="butt" stroke-linejoin="round" /><path d="M1468.0 425.0 L1467.8 426.2 L1467.5 427.6 L1467.3 429.3 L1466.9 431.3 L1466.6 433.4 L1466.2 435.6 L1465.7 437.9 L1465.2 440.3 L1464.6 442.7 L1464.0 445.0 L1463.3 447.4 L1462.5 449.9 L1461.7 452.4 L1460.8 455.1 L1459.8 457.8 L1458.9 460.5 L1457.9 463.2 L1456.9 465.9 L1455.9 468.5 L1455.0 471.0 L1454.1 473.4 L1453.2 475.7 L1452.3 478.0 L1451.5 480.2 L1450.6 482.4 L1449.7 484.6 L1448.8 486.9 L1447.8 489.3 L1446.8 491.8 L1445.7 494.5 L1444.5 497.3 L1443.3 500.3 L1442.0 503.4 L1440.6 506.5 L1439.2 509.8 L1437.9 513.0 L1436.5 516.3 L1435.2 519.6 L1433.9 522.8 L1432.7 526.0 L1431.6 529.2 L1430.5 532.4 L1429.4 535.7 L1428.3 539.0 L1427.3 542.2 L1426.3 545.5 L1425.3 548.6 L1424.4 551.7 L1423.6 554.7 L1422.8 557.5 L1422.1 560.1 L1421.4 562.5 L1420.8 564.6 L1420.2 566.7 L1419.7 568.8 L1419.2 570.9 L1418.7 573.1 L1418.3 575.4 L1417.8 578.1 L1417.3 581.0 L1416.8 584.4 L1416.3 588.1 L1415.8 592.2 L1415.4 596.4 L1414.9 600.7 L1414.5 605.0 L1414.0 609.2 L1413.7 613.2 L1413.3 616.8 L1413.0 620.0 L1412.7 622.9 L1412.5 625.5 L1412.3 628.0 L1412.1 630.3 L1412.0 632.4 L1411.9 634.4 L1411.8 636.1 L1411.7 637.6 L1411.6 638.9 L1411.5 640.0" fill="none" stroke="#2e3539" stroke-width="6" stroke-linejoin="round"/><path d="M1473.9 426.1 L1473.7 427.2 L1473.5 428.6 L1473.2 430.3 L1472.8 432.3 L1472.5 434.4 L1472.0 436.7 L1471.6 439.1 L1471.0 441.6 L1470.4 444.1 L1469.8 446.6 L1469.0 449.1 L1468.2 451.7 L1467.4 454.3 L1466.4 457.0 L1465.5 459.8 L1464.5 462.5 L1463.5 465.3 L1462.5 467.9 L1461.6 470.6 L1460.6 473.1 L1459.7 475.5 L1458.8 477.9 L1457.9 480.2 L1457.1 482.4 L1456.2 484.6 L1455.3 486.9 L1454.3 489.2 L1453.4 491.6 L1452.3 494.1 L1451.3 496.8 L1450.1 499.6 L1448.8 502.6 L1447.5 505.7 L1446.1 508.9 L1444.8 512.1 L1443.4 515.3 L1442.0 518.6 L1440.7 521.8 L1439.5 525.0 L1438.3 528.1 L1437.2 531.2 L1436.1 534.3 L1435.1 537.6 L1434.0 540.8 L1433.0 544.0 L1432.0 547.2 L1431.1 550.3 L1430.2 553.4 L1429.4 556.3 L1428.6 559.1 L1427.8 561.7 L1427.2 564.1 L1426.6 566.2 L1426.0 568.3 L1425.5 570.2 L1425.1 572.2 L1424.6 574.3 L1424.1 576.5 L1423.7 579.1 L1423.2 581.9 L1422.8 585.2 L1422.3 588.9 L1421.8 592.8 L1421.3 597.0 L1420.9 601.3 L1420.4 605.6 L1420.0 609.8 L1419.6 613.7 L1419.3 617.4 L1419.0 620.6 L1418.7 623.4 L1418.5 626.0 L1418.3 628.5 L1418.1 630.8 L1418.0 632.8 L1417.8 634.7 L1417.7 636.4 L1417.6 638.0 L1417.6 639.3 L1417.5 640.4" fill="none" stroke="#fcc52a" stroke-width="6.3" stroke-linecap="round" stroke-linejoin="round"/><path d="M1462.1 423.9 L1461.9 425.1 L1461.6 426.6 L1461.3 428.4 L1461.0 430.3 L1460.7 432.3 L1460.3 434.5 L1459.8 436.7 L1459.3 439.0 L1458.8 441.2 L1458.2 443.4 L1457.6 445.6 L1456.8 448.0 L1456.0 450.5 L1455.1 453.1 L1454.2 455.8 L1453.2 458.5 L1452.2 461.1 L1451.3 463.8 L1450.3 466.4 L1449.4 468.9 L1448.5 471.3 L1447.6 473.6 L1446.8 475.8 L1445.9 478.0 L1445.0 480.2 L1444.1 482.4 L1443.2 484.7 L1442.2 487.1 L1441.2 489.6 L1440.1 492.2 L1439.0 495.0 L1437.8 497.9 L1436.5 501.0 L1435.1 504.2 L1433.7 507.4 L1432.3 510.7 L1430.9 514.0 L1429.6 517.4 L1428.3 520.7 L1427.1 523.9 L1425.9 527.2 L1424.8 530.5 L1423.7 533.8 L1422.6 537.2 L1421.5 540.5 L1420.6 543.7 L1419.6 546.9 L1418.7 550.0 L1417.8 553.0 L1417.0 555.9 L1416.3 558.5 L1415.6 560.8 L1415.0 563.1 L1414.4 565.2 L1413.9 567.3 L1413.4 569.5 L1412.8 571.8 L1412.4 574.3 L1411.9 577.0 L1411.4 580.1 L1410.9 583.5 L1410.4 587.4 L1409.9 591.5 L1409.4 595.7 L1408.9 600.1 L1408.5 604.4 L1408.1 608.6 L1407.7 612.6 L1407.3 616.2 L1407.0 619.4 L1406.8 622.3 L1406.5 625.0 L1406.3 627.6 L1406.1 629.9 L1406.0 632.0 L1405.9 634.0 L1405.8 635.7 L1405.7 637.2 L1405.6 638.5 L1405.5 639.6" fill="none" stroke="#fcc52a" stroke-width="6.3" stroke-linecap="round" stroke-linejoin="round"/><path d="M1455.0 418.0 L1454.8 419.3 L1454.7 420.8 L1454.5 422.7 L1454.2 424.8 L1454.0 427.1 L1453.7 429.5 L1453.3 432.0 L1452.9 434.7 L1452.5 437.3 L1452.0 440.0 L1451.4 442.8 L1450.8 445.7 L1450.1 448.9 L1449.4 452.1 L1448.6 455.4 L1447.8 458.7 L1447.0 462.0 L1446.1 465.1 L1445.3 468.2 L1444.5 471.0 L1443.7 473.6 L1442.9 476.1 L1442.0 478.5 L1441.2 480.8 L1440.3 483.1 L1439.4 485.3 L1438.5 487.5 L1437.6 489.8 L1436.7 492.1 L1435.8 494.5 L1434.8 497.1 L1433.8 499.9 L1432.6 502.8 L1431.5 505.8 L1430.4 508.7 L1429.3 511.5 L1428.3 514.2 L1427.4 516.5 L1426.6 518.5 L1426.0 520.0" fill="none" stroke="#f0893b" stroke-width="4.5" stroke-linecap="round" stroke-linejoin="round" /><path d="M1459.8 493.0 L1447.2 510.2" fill="none" stroke="#f0893b" stroke-width="5.5" stroke-linecap="round" stroke-linejoin="round" /><path d="M1413.6 636.0 L1413.6 639.6 L1413.5 644.4 L1413.5 650.1 L1413.4 656.4 L1413.3 663.2 L1413.2 670.2 L1413.1 677.0 L1413.0 683.5 L1412.9 689.3 L1412.7 694.3 L1412.5 698.6 L1412.2 702.7 L1411.9 706.5 L1411.6 710.1 L1411.3 713.3 L1411.0 716.3 L1410.7 719.0 L1410.4 721.4 L1410.2 723.4 L1410.0 725.1" fill="none" stroke="#2e3539" stroke-width="6" stroke-linecap="round" stroke-linejoin="round" /><path d="M1400.9 636.0 L1400.7 639.6 L1400.3 644.5 L1399.9 650.4 L1399.4 656.9 L1398.9 663.8 L1398.4 670.8 L1398.0 677.7 L1397.6 684.0 L1397.4 689.7 L1397.3 694.3 L1397.4 698.0 L1397.6 701.2 L1397.9 703.8 L1398.3 706.1 L1398.8 708.1 L1399.2 709.9 L1399.7 711.4 L1400.2 712.9 L1400.6 714.4 L1400.9 716.0 L1401.2 717.6 L1401.4 719.0 L1401.6 720.4 L1401.8 721.7 L1402.0 722.8 L1402.2 723.8 L1402.3 724.8 L1402.5 725.6 L1402.6 726.3 L1402.7 726.9" fill="none" stroke="#fcc52a" stroke-width="6" stroke-linecap="round" stroke-linejoin="round" /><path d="M1406.3 640.0 L1406.4 641.6 L1406.5 643.6 L1406.6 645.9 L1406.7 648.5 L1406.9 651.3 L1407.0 654.4 L1407.1 657.5 L1407.2 660.7 L1407.2 664.0 L1407.2 667.2 L1407.1 670.5 L1407.0 674.2 L1406.9 678.0 L1406.8 682.0 L1406.6 686.0 L1406.4 689.9 L1406.2 693.7 L1405.9 697.3 L1405.7 700.5 L1405.4 703.4 L1405.1 705.9 L1404.7 708.2 L1404.3 710.3 L1403.9 712.1 L1403.5 713.8 L1403.1 715.3 L1402.7 716.6 L1402.3 717.8 L1402.0 718.8 L1401.8 719.7" fill="none" stroke="#fcc52a" stroke-width="4.5" stroke-linecap="round" stroke-linejoin="round" /><path d="M1415.4 725.1 L1416.0 726.1 L1416.8 727.3 L1417.7 728.7 L1418.7 730.4 L1419.8 732.1 L1421.0 734.0 L1422.3 735.9 L1423.6 737.8 L1424.9 739.6 L1426.3 741.4 L1427.7 743.1 L1429.2 744.8 L1430.8 746.5 L1432.4 748.2 L1434.1 749.9 L1435.8 751.7 L1437.5 753.5 L1439.2 755.4 L1440.9 757.4 L1442.5 759.5 L1444.1 761.7 L1445.7 764.0 L1447.2 766.3 L1448.7 768.7 L1450.3 771.1 L1451.9 773.7 L1453.5 776.3 L1455.2 779.0 L1456.9 781.9 L1458.8 784.8 L1460.7 787.8 L1462.7 790.8 L1464.8 793.8 L1466.9 796.9 L1469.0 800.1 L1471.2 803.5 L1473.5 807.0 L1475.8 810.8 L1478.2 814.9 L1480.6 819.2 L1483.2 824.2 L1486.1 829.9 L1489.2 836.1 L1492.4 842.7 L1495.5 849.3 L1498.6 855.7 L1501.4 861.7 L1503.9 867.1 L1506.1 871.6 L1507.7 875.0" fill="none" stroke="#2e3539" stroke-width="7" stroke-linecap="round" stroke-linejoin="round" /><path d="M1420.8 636.0 L1420.9 639.1 L1420.9 643.2 L1421.0 648.1 L1421.0 653.7 L1421.1 659.5 L1421.3 665.5 L1421.5 671.3 L1421.7 676.6 L1422.1 681.4 L1422.6 685.3 L1423.2 688.4 L1423.9 690.9 L1424.7 692.9 L1425.6 694.6 L1426.6 696.1 L1427.6 697.4 L1428.6 698.7 L1429.7 700.0 L1430.7 701.6 L1431.7 703.4 L1432.7 705.4 L1433.7 707.5 L1434.8 709.6 L1435.9 711.7 L1437.0 713.9 L1438.1 716.1 L1439.2 718.3 L1440.3 720.6 L1441.4 722.8 L1442.5 725.1 L1443.6 727.4 L1444.6 729.6 L1445.6 731.8 L1446.7 734.1 L1447.7 736.4 L1448.8 738.7 L1449.9 741.1 L1451.0 743.5 L1452.2 746.0 L1453.4 748.6 L1454.7 751.2 L1455.9 753.8 L1457.1 756.4 L1458.4 759.1 L1459.8 761.9 L1461.1 764.7 L1462.6 767.7 L1464.3 770.8 L1466.0 774.1 L1467.9 777.6 L1470.0 781.3 L1472.2 785.2 L1474.6 789.2 L1477.1 793.4 L1479.7 797.7 L1482.3 802.2 L1485.0 806.7 L1487.7 811.4 L1490.5 816.2 L1493.2 821.0 L1496.1 826.2 L1499.2 832.0 L1502.5 838.1 L1505.9 844.4 L1509.2 850.7 L1512.4 856.8 L1515.4 862.4 L1518.0 867.5 L1520.3 871.7 L1522.0 875.0" fill="none" stroke="#fcc52a" stroke-width="6.5" stroke-linecap="round" stroke-linejoin="round" /><path d="M1413.6 741.4 L1414.7 742.4 L1416.1 743.7 L1417.7 745.3 L1419.5 747.0 L1421.5 748.9 L1423.6 750.9 L1425.7 753.0 L1427.8 755.1 L1429.8 757.3 L1431.7 759.5 L1433.5 761.7 L1435.3 764.0 L1437.1 766.3 L1438.9 768.7 L1440.6 771.1 L1442.4 773.7 L1444.2 776.3 L1446.1 779.0 L1447.9 781.9 L1449.8 784.8 L1451.7 787.8 L1453.6 790.8 L1455.4 793.8 L1457.3 796.9 L1459.2 800.1 L1461.2 803.5 L1463.2 807.0 L1465.3 810.8 L1467.4 814.9 L1469.7 819.2 L1472.2 824.2 L1475.0 829.9 L1477.9 836.1 L1481.0 842.7 L1484.1 849.3 L1487.1 855.7 L1489.8 861.7 L1492.3 867.1 L1494.4 871.6 L1496.0 875.0" fill="none" stroke="#fcc52a" stroke-width="6.5" stroke-linecap="round" stroke-linejoin="round" /><path d="M1393.8 746.2 L1392.7 747.3 L1391.3 748.8 L1389.6 750.5 L1387.7 752.4 L1385.7 754.5 L1383.5 756.6 L1381.4 758.8 L1379.2 760.9 L1377.1 763.0 L1375.2 764.8 L1373.4 766.5 L1371.6 768.2 L1369.8 769.8 L1368.1 771.4 L1366.3 772.9 L1364.5 774.5 L1362.6 776.1 L1360.7 777.6 L1358.7 779.2 L1356.6 780.9 L1354.4 782.6 L1352.1 784.4 L1349.8 786.3 L1347.4 788.2 L1345.0 790.1 L1342.5 791.9 L1339.9 793.7 L1337.3 795.4 L1334.6 796.9 L1331.8 798.3 L1328.9 799.5 L1325.9 800.7 L1322.8 801.7 L1319.5 802.6 L1316.3 803.4 L1313.1 804.2 L1309.8 804.9 L1306.7 805.6 L1303.7 806.3 L1300.8 807.0 L1298.0 807.7 L1295.0 808.3 L1292.1 808.9 L1289.2 809.5 L1286.5 810.0 L1283.8 810.5 L1281.4 810.9 L1279.3 811.3 L1277.4 811.6 L1276.0 811.9" fill="none" stroke="#2e3539" stroke-width="6" stroke-linecap="round" stroke-linejoin="round" /><path d="M1389.0 738.0 L1388.6 738.2 L1388.1 738.4 L1387.6 738.7 L1387.0 738.9 L1386.4 739.2 L1385.6 739.6 L1384.7 740.2 L1383.7 740.8 L1382.6 741.6 L1381.4 742.5 L1380.0 743.6 L1378.4 744.9 L1376.6 746.4 L1374.7 748.0 L1372.7 749.7 L1370.7 751.4 L1368.6 753.2 L1366.6 755.0 L1364.7 756.8 L1362.8 758.6 L1361.0 760.4 L1359.3 762.2 L1357.5 764.1 L1355.8 766.0 L1354.1 768.0 L1352.4 769.9 L1350.7 771.8 L1348.9 773.7 L1347.2 775.5 L1345.5 777.2 L1343.8 778.9 L1342.2 780.5 L1340.6 782.1 L1339.0 783.7 L1337.4 785.3 L1335.8 786.8 L1334.1 788.2 L1332.2 789.6 L1330.2 790.9 L1328.1 792.1 L1325.8 793.2 L1323.2 794.3 L1320.6 795.3 L1317.8 796.3 L1314.9 797.2 L1312.0 798.0 L1309.1 798.8 L1306.3 799.5 L1303.5 800.2 L1300.8 800.8 L1298.1 801.4 L1295.3 801.9 L1292.4 802.4 L1289.5 802.8 L1286.7 803.2 L1284.0 803.5 L1281.5 803.8 L1279.3 804.1 L1277.5 804.3 L1276.0 804.5" fill="none" stroke="#fcc52a" stroke-width="6" stroke-linecap="round" stroke-linejoin="round" /><path d="M1400.0 747.4 L1399.3 748.4 L1398.4 749.7 L1397.4 751.2 L1396.2 752.9 L1395.0 754.8 L1393.6 756.7 L1392.2 758.8 L1390.7 760.8 L1389.1 762.8 L1387.6 764.8 L1386.0 766.8 L1384.4 768.9 L1382.7 771.0 L1380.9 773.2 L1379.1 775.4 L1377.2 777.6 L1375.2 779.8 L1373.2 781.9 L1371.1 784.0 L1369.0 785.9 L1366.8 787.7 L1364.5 789.5 L1362.2 791.3 L1359.8 793.0 L1357.4 794.6 L1354.9 796.2 L1352.3 797.8 L1349.7 799.3 L1347.0 800.7 L1344.2 802.0 L1341.4 803.3 L1338.5 804.4 L1335.6 805.5 L1332.5 806.6 L1329.5 807.6 L1326.3 808.5 L1323.2 809.4 L1319.9 810.3 L1316.6 811.1 L1313.2 811.9 L1309.6 812.7 L1305.6 813.5 L1301.3 814.2 L1297.0 814.9 L1292.7 815.6 L1288.5 816.2 L1284.6 816.8 L1281.2 817.3 L1278.2 817.7 L1276.0 818.1" fill="none" stroke="#fcc52a" stroke-width="6" stroke-linecap="round" stroke-linejoin="round" /><path d="M1392.0 739.0 L1391.2 739.5 L1390.1 740.0 L1388.8 740.7 L1387.3 741.4 L1385.8 742.2 L1384.1 743.1 L1382.5 744.0 L1380.9 745.0 L1379.4 746.0 L1378.0 747.0 L1376.7 748.1 L1375.4 749.3 L1374.2 750.5 L1373.0 751.8 L1371.8 753.1 L1370.6 754.5 L1369.4 755.9 L1368.2 757.3 L1367.1 758.6 L1366.0 760.0 L1364.9 761.4 L1363.9 762.8 L1363.0 764.2 L1362.0 765.6 L1361.1 767.1 L1360.2 768.5 L1359.2 769.9 L1358.2 771.3 L1357.2 772.7 L1356.0 774.0 L1354.7 775.3 L1353.2 776.7 L1351.7 778.1 L1350.0 779.5 L1348.4 780.9 L1346.8 782.2 L1345.3 783.3 L1344.0 784.4 L1342.9 785.3 L1342.0 786.0" fill="none" stroke="#fcc52a" stroke-width="4.5" stroke-linecap="round" stroke-linejoin="round" /><path d="M1369.0 781.0 L1369.7 780.5 L1370.6 779.9 L1371.7 779.1 L1372.9 778.2 L1374.2 777.3 L1375.6 776.3 L1377.0 775.4 L1378.4 774.5 L1379.7 773.7 L1381.0 773.0 L1382.2 772.4 L1383.4 771.8 L1384.6 771.3 L1385.8 770.7 L1387.0 770.2 L1388.2 769.8 L1389.5 769.4 L1390.9 769.1 L1392.3 768.8 L1393.8 768.5 L1395.4 768.3 L1397.0 768.1 L1398.8 768.0 L1400.5 767.9 L1402.3 767.8 L1404.2 767.8 L1406.2 767.9 L1408.2 768.0 L1410.3 768.2 L1412.4 768.5 L1414.7 768.8 L1417.1 769.2 L1419.6 769.6 L1422.2 770.1 L1424.8 770.7 L1427.4 771.3 L1430.0 772.0 L1432.5 772.8 L1434.9 773.7 L1437.2 774.7 L1439.3 775.8 L1441.4 777.0 L1443.4 778.4 L1445.3 779.8 L1447.1 781.3 L1448.9 782.9 L1450.7 784.5 L1452.4 786.2 L1454.1 787.9 L1455.8 789.6 L1457.5 791.5 L1459.3 793.6 L1461.0 795.8 L1462.7 798.2 L1464.4 800.5 L1466.0 802.7 L1467.4 804.8 L1468.7 806.7 L1469.8 808.3 L1470.7 809.5" fill="none" stroke="#fcc52a" stroke-width="6" stroke-linecap="round" stroke-linejoin="round" /><path d="M1391.3 768.0 L1391.8 767.3 L1392.5 766.3 L1393.3 765.2 L1394.2 763.9 L1395.2 762.5 L1396.2 761.1 L1397.2 759.7 L1398.2 758.4 L1399.1 757.2 L1400.0 756.1 L1400.8 755.1 L1401.7 754.2 L1402.6 753.3 L1403.4 752.5 L1404.3 751.7 L1405.1 750.9 L1405.8 750.2 L1406.5 749.6 L1407.1 749.1 L1407.5 748.7" fill="none" stroke="#fcc52a" stroke-width="5" stroke-linecap="round" stroke-linejoin="round" /><path d="M1416.0 746.0 L1428.5 764.8" fill="none" stroke="#fcc52a" stroke-width="5" stroke-linecap="round" stroke-linejoin="round" /><path d="M1417.2 737.8 L1431.7 741.4" fill="none" stroke="#fcc52a" stroke-width="6" stroke-linecap="round" stroke-linejoin="round" /><path d="M1700.0 258.5 L1696.3 259.8 L1691.3 261.6 L1685.4 263.7 L1678.8 266.0 L1672.0 268.4 L1665.2 270.9 L1658.9 273.3 L1653.3 275.6 L1648.4 277.7 L1643.8 279.8 L1639.4 281.8 L1635.2 283.9 L1631.1 286.0 L1627.0 288.2 L1622.9 290.5 L1618.6 292.9 L1614.3 295.4 L1609.9 298.0 L1605.6 300.7 L1601.3 303.5 L1597.0 306.3 L1592.7 309.3 L1588.3 312.3 L1584.0 315.4 L1579.7 318.6 L1575.3 321.8 L1571.0 325.1 L1566.6 328.5 L1562.3 332.0 L1558.0 335.6 L1553.6 339.4 L1549.3 343.2 L1544.9 347.2 L1540.4 351.5 L1535.9 356.0 L1531.3 360.5 L1526.9 365.0 L1522.6 369.5 L1518.5 373.8 L1514.7 377.8 L1511.1 381.7 L1507.6 385.6 L1504.3 389.4 L1501.2 393.1 L1498.2 396.6 L1495.4 399.9 L1492.8 402.9 L1490.4 405.6 L1488.2 408.0 L1486.2 410.1 L1484.3 411.9 L1482.7 413.5 L1481.2 414.9 L1479.9 416.1 L1478.9 417.1 L1478.0 418.0 L1483.5 466.0 L1484.5 464.2 L1485.7 461.9 L1487.1 459.1 L1488.8 456.0 L1490.6 452.6 L1492.7 449.1 L1494.9 445.5 L1497.3 441.9 L1500.0 438.2 L1502.9 434.3 L1506.2 430.1 L1509.5 425.9 L1513.0 421.6 L1516.5 417.3 L1520.0 413.1 L1523.3 409.0 L1526.5 405.1 L1529.6 401.2 L1532.7 397.4 L1535.8 393.6 L1538.9 389.8 L1542.2 385.9 L1545.6 381.9 L1549.3 377.8 L1553.2 373.4 L1557.4 368.8 L1561.7 364.1 L1566.1 359.3 L1570.6 354.5 L1575.1 349.9 L1579.6 345.5 L1584.0 341.4 L1588.3 337.6 L1592.7 334.0 L1597.0 330.7 L1601.3 327.4 L1605.6 324.3 L1609.9 321.3 L1614.3 318.3 L1618.6 315.4 L1622.9 312.5 L1627.0 309.8 L1631.1 307.2 L1635.2 304.6 L1639.4 302.1 L1643.8 299.6 L1648.4 297.2 L1653.3 294.7 L1658.9 292.1 L1665.2 289.4 L1672.0 286.7 L1678.8 284.1 L1685.4 281.6 L1691.3 279.3 L1696.3 277.4 L1700.0 276.0 Z" fill="#4b1a3e"/><path d="M1478.0 440.0 L1492.1 421.1 L1503.0 408.0 L1490.0 432.0 L1480.0 452.0Z" fill="#111a1f" /><path d="M1694.9 268.7 L1692.4 269.7 L1689.1 271.1 L1685.3 272.6 L1680.9 274.4 L1676.3 276.3 L1671.4 278.2 L1666.6 280.3 L1661.8 282.3 L1657.4 284.2 L1653.3 286.0 L1649.6 287.7 L1645.9 289.3 L1642.4 290.9 L1638.9 292.5 L1635.5 294.1 L1632.1 295.8 L1628.8 297.5 L1625.4 299.3 L1622.0 301.2 L1618.6 303.3 L1615.1 305.5 L1611.7 307.9 L1608.2 310.4 L1604.8 313.0 L1601.3 315.6 L1597.8 318.4 L1594.4 321.1 L1590.9 323.9 L1587.5 326.6 L1584.0 329.3 L1580.5 332.0 L1577.1 334.6 L1573.6 337.3 L1570.1 339.9 L1566.6 342.6 L1563.2 345.3 L1559.7 348.1 L1556.2 351.0 L1552.8 353.9 L1549.3 357.0 L1545.8 360.2 L1542.2 363.6 L1538.5 367.1 L1534.9 370.6 L1531.2 374.2 L1527.7 377.9 L1524.2 381.5 L1520.9 385.0 L1517.7 388.4 L1514.7 391.7 L1511.9 395.0 L1509.1 398.4 L1506.3 401.8 L1503.7 405.3 L1501.2 408.6 L1498.9 411.7 L1496.8 414.6 L1495.0 417.2 L1493.4 419.4 L1492.1 421.1" fill="none" stroke="#3d4146" stroke-width="1.6" stroke-linecap="round" stroke-linejoin="round" /><path d="M1907.9 281.0 L1912.0 278.5 L1921.6 293.0 L1918.0 297.5Z" fill="#8d9295" /><path d="M1851.3 240.4 L1852.9 239.7 L1855.1 238.8 L1857.6 237.7 L1860.4 236.5 L1863.5 235.2 L1866.7 233.9 L1869.8 232.5 L1873.0 231.1 L1875.9 229.8 L1878.6 228.6 L1881.2 227.4 L1883.7 226.3 L1886.3 225.2 L1888.9 224.0 L1891.4 222.9 L1893.8 221.8 L1896.1 220.6 L1898.3 219.5 L1900.2 218.2 L1902.0 217.0 L1903.6 215.7 L1905.0 214.4 L1906.2 213.1 L1907.3 211.8 L1908.2 210.4 L1909.1 209.0 L1909.9 207.6 L1910.6 206.2 L1911.2 204.8 L1911.8 203.3 L1912.3 201.7 L1912.7 200.0 L1913.0 198.2 L1913.3 196.4 L1913.4 194.6 L1913.5 192.8 L1913.6 191.2 L1913.7 189.8 L1913.7 188.5 L1913.8 187.6" fill="none" stroke="#4b1a3e" stroke-width="6.8" stroke-linecap="butt" stroke-linejoin="round" /><path d="M1851.3 246.2 L1853.6 246.6 L1856.6 247.1 L1860.1 247.6 L1864.1 248.2 L1868.4 248.9 L1872.8 249.7 L1877.1 250.5 L1881.3 251.6 L1885.1 252.7 L1888.4 254.0 L1891.3 255.5 L1894.0 257.1 L1896.5 258.8 L1898.9 260.7 L1901.2 262.7 L1903.4 264.8 L1905.5 266.9 L1907.6 269.1 L1909.7 271.4 L1911.8 273.6 L1914.0 275.9 L1916.2 278.2 L1918.4 280.5 L1920.5 283.0 L1922.6 285.5 L1924.7 288.0 L1926.6 290.6 L1928.3 293.3 L1929.9 296.1 L1931.3 299.0 L1932.5 302.2 L1933.4 305.7 L1934.3 309.4 L1934.9 313.3 L1935.5 317.2 L1935.9 320.9 L1936.3 324.4 L1936.6 327.6 L1936.9 330.2 L1937.2 332.2" fill="none" stroke="#4b1a3e" stroke-width="6.8" stroke-linecap="butt" stroke-linejoin="round" /><path d="M1853.2 258.0 L1855.1 257.9 L1857.6 257.9 L1860.5 257.8 L1863.8 257.7 L1867.4 257.6 L1871.0 257.5 L1874.7 257.2 L1878.2 256.9 L1881.5 256.5 L1884.5 256.0 L1887.2 255.4 L1889.7 254.8 L1892.2 254.1 L1894.6 253.3 L1896.9 252.4 L1899.2 251.5 L1901.4 250.4 L1903.6 249.2 L1905.8 247.8 L1907.9 246.2 L1910.1 244.4 L1912.3 242.5 L1914.4 240.4 L1916.6 238.2 L1918.7 235.8 L1920.7 233.4 L1922.6 230.8 L1924.4 228.2 L1926.0 225.5 L1927.4 222.8 L1928.6 219.8 L1929.7 216.5 L1930.6 213.0 L1931.4 209.3 L1932.1 205.7 L1932.6 202.1 L1933.1 198.8 L1933.6 195.9 L1933.9 193.4 L1934.3 191.5" fill="none" stroke="#4b1a3e" stroke-width="6.8" stroke-linecap="butt" stroke-linejoin="round" /><path d="M1851.3 263.8 L1852.9 264.8 L1855.1 266.1 L1857.6 267.5 L1860.4 269.2 L1863.5 271.0 L1866.7 273.0 L1869.8 275.0 L1873.0 277.1 L1875.9 279.2 L1878.6 281.4 L1881.2 283.6 L1883.7 285.9 L1886.3 288.3 L1888.8 290.7 L1891.3 293.2 L1893.7 295.8 L1896.0 298.5 L1898.1 301.2 L1900.1 304.0 L1902.0 306.8 L1903.7 309.8 L1905.2 312.9 L1906.6 316.3 L1907.9 319.7 L1909.1 323.1 L1910.2 326.5 L1911.2 329.7 L1912.1 332.8 L1913.0 335.6 L1913.8 338.0 L1914.5 340.1 L1915.1 342.1 L1915.7 343.8 L1916.1 345.4 L1916.5 346.8 L1916.8 348.0 L1917.1 349.1 L1917.3 350.1 L1917.5 351.0 L1917.7 351.7" fill="none" stroke="#4b1a3e" stroke-width="6.8" stroke-linecap="butt" stroke-linejoin="round" /><path d="M1889.8 212.5 Q1893.3 212.0 1895.3 210.0 Q1898.3 212.5 1900.8 209.0 Q1903.3 212.5 1906.3 210.0 Q1908.3 212.0 1911.8 212.5 Q1913.8 221.5 1910.3 226.5 Q1906.8 232.0 1900.8 234.5 Q1894.8 232.0 1891.3 226.5 Q1887.8 221.5 1889.8 212.5 Z" fill="#9c9c9c" stroke="#fff" stroke-width="1.6"/><line x1="1889.3" y1="216.0" x2="1912.3" y2="216.0" stroke="#fff" stroke-width="1.3"/><text x="1900.8" y="225.0" text-anchor="middle" dominant-baseline="central" font-family="Liberation Sans" font-size="12.5" font-weight="700" fill="#f4f4f4" letter-spacing="0.5">65</text><path d="M1920.6 172.0 L1920.6 176.6 L1920.6 182.6 L1920.5 189.6 L1920.5 197.5 L1920.5 206.0 L1920.4 214.9 L1920.4 224.0 L1920.4 233.0 L1920.4 241.8 L1920.5 250.0 L1920.6 257.9 L1920.6 266.0 L1920.7 274.0 L1920.8 282.1 L1920.9 290.2 L1921.1 298.3 L1921.2 306.3 L1921.5 314.3 L1921.7 322.2 L1922.0 330.0 L1922.3 337.7 L1922.6 345.3 L1922.9 352.9 L1923.3 360.4 L1923.7 367.8 L1924.1 375.2 L1924.7 382.7 L1925.3 390.1 L1926.1 397.5 L1927.0 405.0 L1928.1 412.4 L1929.3 419.7 L1930.6 426.9 L1932.0 434.0 L1933.5 441.2 L1935.1 448.6 L1936.7 456.0 L1938.5 463.7 L1940.2 471.7 L1942.0 480.0 L1944.0 489.1 L1946.2 499.2 L1948.5 510.0 L1951.0 521.1 L1953.4 532.2 L1955.8 542.9 L1958.1 552.9 L1960.0 561.8 L1961.7 569.3 L1963.0 575.0" fill="none" stroke="#2b3236" stroke-width="3" stroke-linecap="round" stroke-linejoin="round" /><path d="M1932.3 172.0 L1932.3 176.6 L1932.3 182.6 L1932.3 189.6 L1932.3 197.5 L1932.3 206.0 L1932.3 214.9 L1932.3 224.0 L1932.4 233.0 L1932.4 241.8 L1932.5 250.0 L1932.6 257.9 L1932.7 266.0 L1932.8 274.0 L1932.9 282.1 L1933.1 290.2 L1933.2 298.3 L1933.4 306.3 L1933.6 314.3 L1933.8 322.2 L1934.0 330.0 L1934.2 337.7 L1934.4 345.3 L1934.5 352.9 L1934.7 360.4 L1934.8 367.8 L1935.1 375.2 L1935.4 382.7 L1935.8 390.1 L1936.3 397.5 L1937.0 405.0 L1937.8 412.4 L1938.8 419.7 L1939.8 426.9 L1941.0 434.0 L1942.2 441.2 L1943.6 448.6 L1944.9 456.0 L1946.3 463.7 L1947.6 471.7 L1949.0 480.0 L1950.4 489.1 L1952.0 499.2 L1953.8 510.0 L1955.5 521.1 L1957.2 532.2 L1958.9 542.9 L1960.5 552.9 L1961.9 561.8 L1963.1 569.3 L1964.0 575.0" fill="none" stroke="#2b3236" stroke-width="3" stroke-linecap="round" stroke-linejoin="round" /><path d="M1914.5 172.0 L1914.5 176.6 L1914.4 182.6 L1914.3 189.6 L1914.3 197.5 L1914.2 206.0 L1914.1 214.9 L1914.1 224.0 L1914.0 233.0 L1914.0 241.8 L1914.0 250.0 L1914.0 257.9 L1914.0 266.0 L1914.1 274.0 L1914.1 282.1 L1914.2 290.2 L1914.2 298.3 L1914.4 306.3 L1914.5 314.3 L1914.7 322.2 L1915.0 330.0 L1915.3 337.7 L1915.6 345.3 L1915.9 352.9 L1916.2 360.4 L1916.6 367.8 L1917.1 375.2 L1917.6 382.7 L1918.3 390.1 L1919.1 397.5 L1920.0 405.0 L1921.1 412.4 L1922.3 419.7 L1923.6 426.9 L1925.0 434.0 L1926.5 441.2 L1928.1 448.6 L1929.7 456.0 L1931.5 463.7 L1933.2 471.7 L1935.0 480.0 L1937.0 489.1 L1939.2 499.2 L1941.5 510.0 L1944.0 521.1 L1946.4 532.2 L1948.8 542.9 L1951.1 552.9 L1953.0 561.8 L1954.7 569.3 L1956.0 575.0" fill="none" stroke="#fcc52a" stroke-width="5.5" stroke-linecap="round" stroke-linejoin="round" /><path d="M1937.4 172.0 L1937.4 176.6 L1937.5 182.6 L1937.5 189.6 L1937.5 197.5 L1937.6 206.0 L1937.6 214.9 L1937.7 224.0 L1937.8 233.0 L1937.9 241.8 L1938.0 250.0 L1938.1 257.9 L1938.3 266.0 L1938.5 274.0 L1938.7 282.1 L1938.8 290.2 L1939.1 298.3 L1939.3 306.3 L1939.5 314.3 L1939.8 322.2 L1940.0 330.0 L1940.2 337.7 L1940.4 345.3 L1940.5 352.9 L1940.7 360.4 L1940.9 367.8 L1941.1 375.2 L1941.4 382.7 L1941.8 390.1 L1942.3 397.5 L1943.0 405.0 L1943.8 412.4 L1944.8 419.7 L1945.8 426.9 L1947.0 434.0 L1948.2 441.2 L1949.6 448.6 L1950.9 456.0 L1952.3 463.7 L1953.6 471.7 L1955.0 480.0 L1956.4 489.1 L1958.0 499.2 L1959.8 510.0 L1961.5 521.1 L1963.2 532.2 L1964.9 542.9 L1966.5 552.9 L1967.9 561.8 L1969.1 569.3 L1970.0 575.0" fill="none" stroke="#fcc52a" stroke-width="5.5" stroke-linecap="round" stroke-linejoin="round" /><path d="M2001.0 172.0 L1999.4 186.4 L1997.2 205.7 L1994.5 228.6 L1991.6 254.3 L1988.5 281.6 L1985.4 309.5 L1982.3 336.8 L1979.5 362.5 L1977.0 385.6 L1975.0 405.0 L1973.4 421.5 L1972.1 436.6 L1971.0 450.5 L1970.1 463.1 L1969.4 474.6 L1968.8 484.8 L1968.2 494.0 L1967.8 502.0 L1967.4 509.0 L1967.0 515.0" fill="none" stroke="#2e3539" stroke-width="4" stroke-linecap="round" stroke-linejoin="round" /><path d="M1997.0 172.0 L1995.3 186.4 L1993.0 205.7 L1990.2 228.7 L1987.1 254.4 L1983.8 281.8 L1980.5 309.6 L1977.3 336.9 L1974.3 362.7 L1971.6 385.7 L1969.5 405.0 L1967.8 421.3 L1966.3 436.3 L1965.0 450.0 L1963.9 462.4 L1963.0 473.6 L1962.3 483.6 L1961.6 492.5 L1961.0 500.3 L1960.5 507.1 L1960.0 513.0" fill="none" stroke="#f0893b" stroke-width="5.5" stroke-linecap="round" stroke-linejoin="round" /><path d="M2006.0 172.0 L2004.5 186.4 L2002.5 205.6 L2000.2 228.5 L1997.5 254.0 L1994.7 281.2 L1991.8 309.0 L1989.1 336.4 L1986.5 362.2 L1984.2 385.4 L1982.4 405.0 L1980.9 421.9 L1979.7 437.5 L1978.6 452.1 L1977.7 465.4 L1977.0 477.6 L1976.3 488.6 L1975.8 498.4 L1975.3 507.1 L1974.9 514.6 L1974.5 521.0" fill="none" stroke="#f0893b" stroke-width="5.5" stroke-linecap="round" stroke-linejoin="round" /><path d="M1966.0 481.0 L1966.3 483.2 L1966.8 486.0 L1967.3 489.3 L1967.9 493.0 L1968.5 497.1 L1969.2 501.4 L1969.9 505.9 L1970.6 510.6 L1971.3 515.3 L1972.0 520.0 L1972.8 525.1 L1973.6 530.9 L1974.5 537.1 L1975.4 543.5 L1976.4 549.9 L1977.3 556.2 L1978.1 562.0 L1978.9 567.3 L1979.5 571.7 L1980.0 575.0" fill="none" stroke="#8d9295" stroke-width="6" stroke-linecap="round" stroke-linejoin="round" /><path d="M1975.0 523.0 L1986.0 575.0" fill="none" stroke="#cf5252" stroke-width="6" stroke-linecap="round" stroke-linejoin="round" /><path d="M1935.0 506.0 L1952.0 575.0" fill="none" stroke="#7d2a5a" stroke-width="5" stroke-linecap="round" stroke-linejoin="round" /><path d="M1700.0 880.0 L1701.6 878.4 L1703.7 876.3 L1706.2 873.8 L1709.0 871.0 L1712.0 868.1 L1715.2 865.0 L1718.4 862.1 L1721.7 859.4 L1724.9 857.0 L1728.0 855.0 L1731.0 853.4 L1734.1 851.9 L1737.3 850.6 L1740.5 849.5 L1743.8 848.5 L1747.0 847.7 L1750.3 847.0 L1753.5 846.5 L1756.8 846.2 L1760.0 846.0 L1763.2 846.0 L1766.5 846.1 L1769.8 846.3 L1773.1 846.7 L1776.4 847.2 L1779.6 848.0 L1782.8 848.9 L1786.0 850.1 L1789.0 851.4 L1792.0 853.0 L1795.0 855.0 L1798.0 857.6 L1801.1 860.5 L1804.1 863.7 L1807.0 866.9 L1809.8 870.2 L1812.3 873.3 L1814.6 876.0 L1816.5 878.3 L1818.0 880.0" fill="none" stroke="#cf5252" stroke-width="19" stroke-linecap="butt" stroke-linejoin="round" /><path d="M1700.0 880.0 L1701.6 878.4 L1703.7 876.3 L1706.2 873.8 L1709.0 871.0 L1712.0 868.1 L1715.2 865.0 L1718.4 862.1 L1721.7 859.4 L1724.9 857.0 L1728.0 855.0 L1731.0 853.4 L1734.1 851.9 L1737.3 850.6 L1740.5 849.5 L1743.8 848.5 L1747.0 847.7 L1750.3 847.0 L1753.5 846.5 L1756.8 846.2 L1760.0 846.0 L1763.2 846.0 L1766.5 846.1 L1769.8 846.3 L1773.1 846.7 L1776.4 847.2 L1779.6 848.0 L1782.8 848.9 L1786.0 850.1 L1789.0 851.4 L1792.0 853.0 L1795.0 855.0 L1798.0 857.6 L1801.1 860.5 L1804.1 863.7 L1807.0 866.9 L1809.8 870.2 L1812.3 873.3 L1814.6 876.0 L1816.5 878.3 L1818.0 880.0" fill="none" stroke="#8d9295" stroke-width="6.3" stroke-linecap="butt" stroke-linejoin="round" /><path d="M1712.0 876.0 L1713.2 874.9 L1714.7 873.5 L1716.4 871.8 L1718.4 869.9 L1720.6 867.9 L1722.9 865.9 L1725.3 863.9 L1727.9 862.0 L1730.5 860.4 L1733.2 859.0 L1736.2 857.9 L1739.5 856.8 L1743.2 855.9 L1747.1 855.1 L1750.9 854.4 L1754.7 853.8 L1758.2 853.3 L1761.4 852.8 L1764.0 852.4 L1766.0 852.0" fill="none" stroke="#f0893b" stroke-width="5.5" stroke-linecap="butt" stroke-linejoin="round" /><path d="M1680.0 857.7 L1681.8 856.4 L1684.0 854.6 L1686.7 852.5 L1689.6 850.1 L1692.9 847.6 L1696.3 845.0 L1699.8 842.4 L1703.4 840.0 L1707.0 837.7 L1710.5 835.8 L1714.1 834.1 L1717.9 832.4 L1721.9 830.8 L1726.0 829.2 L1730.2 827.8 L1734.3 826.4 L1738.2 825.2 L1742.0 824.2 L1745.5 823.3 L1748.7 822.5 L1751.6 822.0 L1754.4 821.6 L1757.0 821.5 L1759.5 821.5 L1761.7 821.7 L1763.8 821.9 L1765.7 822.1 L1767.4 822.3 L1768.8 822.4 L1770.0 822.5" fill="none" stroke="#9aa0a3" stroke-width="1.2" stroke-linecap="round" stroke-linejoin="round" /><path d="M1765.0 820.6 L1822.2 803.4" fill="none" stroke="#9aa0a3" stroke-width="1.2" stroke-linecap="round" stroke-linejoin="round" /><path d="M1922.4 804.1 L1946.0 860.9 L1950.0 870.0" fill="none" stroke="#9aa0a3" stroke-width="1.0" stroke-linecap="round" stroke-linejoin="round" /><path d="M1855.0 874.0 L2020.0 803.0" fill="none" stroke="#fcc52a" stroke-width="14" stroke-linecap="butt" stroke-linejoin="round" /><path d="M1875.0 864.0 L2020.0 802.0" fill="none" stroke="#ffffff" stroke-width="2" stroke-linecap="butt" stroke-linejoin="round" /><path d="M1847.0 870.0 L1852.0 865.0 L1870.0 864.0 L1894.0 866.0 L1890.0 870.0Z" fill="#ffffff" /><line x1="1713" y1="264" x2="1836.5" y2="254" stroke="#fff" stroke-width="18" /><circle cx="1713" cy="264" r="17.4" fill="#fff"/><path d="M1711 253.5 Q1713 252 1715 253.5 L1720.5 271 H1722.8 V272.6 H1703.2 V271 H1705.5 Z" fill="#ff5a2e"/><circle cx="1837.5" cy="253.6" r="17.4" fill="#fff"/><path d="M1835.5 243.1 Q1837.5 241.6 1839.5 243.1 L1845.0 260.6 H1847.3 V262.2 H1827.7 V260.6 H1830.0 Z" fill="#ff5a2e"/><text x="1524" y="272" transform="rotate(-12.5 1524 272)" text-anchor="middle" dominant-baseline="central" font-family="Liberation Sans" font-size="14.5" font-weight="400" letter-spacing="0.3" fill="#111a1f" stroke="#111a1f" stroke-width="2.4" stroke-linejoin="round">Vantage Way</text><text x="1524" y="272" transform="rotate(-12.5 1524 272)" text-anchor="middle" dominant-baseline="central" font-family="Liberation Sans" font-size="14.5" font-weight="400" letter-spacing="0.3" fill="#c3c8cb" stroke="#c3c8cb" stroke-width="0.45" stroke-linejoin="round">Vantage Way</text><text x="1433.7" y="329" transform="rotate(0 1433.7 329)" text-anchor="middle" dominant-baseline="central" font-family="Liberation Sans" font-size="13.5" font-weight="400" letter-spacing="0.3" fill="#111a1f" stroke="#111a1f" stroke-width="2.4" stroke-linejoin="round">Millennium Maxwell</text><text x="1433.7" y="329" transform="rotate(0 1433.7 329)" text-anchor="middle" dominant-baseline="central" font-family="Liberation Sans" font-size="13.5" font-weight="400" letter-spacing="0.3" fill="#c3c8cb" stroke="#c3c8cb" stroke-width="0.45" stroke-linejoin="round">Millennium Maxwell</text><text x="1433.7" y="345" transform="rotate(0 1433.7 345)" text-anchor="middle" dominant-baseline="central" font-family="Liberation Sans" font-size="13.5" font-weight="400" letter-spacing="0.3" fill="#111a1f" stroke="#111a1f" stroke-width="2.4" stroke-linejoin="round">House Hotel Nashville</text><text x="1433.7" y="345" transform="rotate(0 1433.7 345)" text-anchor="middle" dominant-baseline="central" font-family="Liberation Sans" font-size="13.5" font-weight="400" letter-spacing="0.3" fill="#c3c8cb" stroke="#c3c8cb" stroke-width="0.45" stroke-linejoin="round">House Hotel Nashville</text><text x="1349.5" y="497" transform="rotate(70 1349.5 497)" text-anchor="middle" dominant-baseline="central" font-family="Liberation Sans" font-size="13" font-weight="400" letter-spacing="0.3" fill="#111a1f" stroke="#111a1f" stroke-width="2.4" stroke-linejoin="round">10th Ave N</text><text x="1349.5" y="497" transform="rotate(70 1349.5 497)" text-anchor="middle" dominant-baseline="central" font-family="Liberation Sans" font-size="13" font-weight="400" letter-spacing="0.3" fill="#c3c8cb" stroke="#c3c8cb" stroke-width="0.45" stroke-linejoin="round">10th Ave N</text><text x="1400.5" y="467.5" transform="rotate(72 1400.5 467.5)" text-anchor="middle" dominant-baseline="central" font-family="Liberation Sans" font-size="13" font-weight="400" letter-spacing="0.3" fill="#111a1f" stroke="#111a1f" stroke-width="2.4" stroke-linejoin="round">Delta Ave</text><text x="1400.5" y="467.5" transform="rotate(72 1400.5 467.5)" text-anchor="middle" dominant-baseline="central" font-family="Liberation Sans" font-size="13" font-weight="400" letter-spacing="0.3" fill="#c3c8cb" stroke="#c3c8cb" stroke-width="0.45" stroke-linejoin="round">Delta Ave</text><text x="1511.5" y="496" transform="rotate(62 1511.5 496)" text-anchor="middle" dominant-baseline="central" font-family="Liberation Sans" font-size="13" font-weight="400" letter-spacing="0.3" fill="#111a1f" stroke="#111a1f" stroke-width="2.4" stroke-linejoin="round">7th Ave N</text><text x="1511.5" y="496" transform="rotate(62 1511.5 496)" text-anchor="middle" dominant-baseline="central" font-family="Liberation Sans" font-size="13" font-weight="400" letter-spacing="0.3" fill="#c3c8cb" stroke="#c3c8cb" stroke-width="0.45" stroke-linejoin="round">7th Ave N</text><text x="1538" y="481" transform="rotate(62 1538 481)" text-anchor="middle" dominant-baseline="central" font-family="Liberation Sans" font-size="13" font-weight="400" letter-spacing="0.3" fill="#111a1f" stroke="#111a1f" stroke-width="2.4" stroke-linejoin="round">6th Ave N</text><text x="1538" y="481" transform="rotate(62 1538 481)" text-anchor="middle" dominant-baseline="central" font-family="Liberation Sans" font-size="13" font-weight="400" letter-spacing="0.3" fill="#c3c8cb" stroke="#c3c8cb" stroke-width="0.45" stroke-linejoin="round">6th Ave N</text><text x="1705" y="444.5" transform="rotate(-64 1705 444.5)" text-anchor="middle" dominant-baseline="central" font-family="Liberation Sans" font-size="13" font-weight="400" letter-spacing="0.3" fill="#111a1f" stroke="#111a1f" stroke-width="2.4" stroke-linejoin="round">2nd Ave N</text><text x="1705" y="444.5" transform="rotate(-64 1705 444.5)" text-anchor="middle" dominant-baseline="central" font-family="Liberation Sans" font-size="13" font-weight="400" letter-spacing="0.3" fill="#c3c8cb" stroke="#c3c8cb" stroke-width="0.45" stroke-linejoin="round">2nd Ave N</text><text x="1343" y="618" transform="rotate(58 1343 618)" text-anchor="middle" dominant-baseline="central" font-family="Liberation Sans" font-size="13" font-weight="400" letter-spacing="0.3" fill="#111a1f" stroke="#111a1f" stroke-width="2.4" stroke-linejoin="round">12th Ave N</text><text x="1343" y="618" transform="rotate(58 1343 618)" text-anchor="middle" dominant-baseline="central" font-family="Liberation Sans" font-size="13" font-weight="400" letter-spacing="0.3" fill="#c3c8cb" stroke="#c3c8cb" stroke-width="0.45" stroke-linejoin="round">12th Ave N</text><text x="1369" y="610" transform="rotate(58 1369 610)" text-anchor="middle" dominant-baseline="central" font-family="Liberation Sans" font-size="13" font-weight="400" letter-spacing="0.3" fill="#111a1f" stroke="#111a1f" stroke-width="2.4" stroke-linejoin="round">11th Ave N</text><text x="1369" y="610" transform="rotate(58 1369 610)" text-anchor="middle" dominant-baseline="central" font-family="Liberation Sans" font-size="13" font-weight="400" letter-spacing="0.3" fill="#c3c8cb" stroke="#c3c8cb" stroke-width="0.45" stroke-linejoin="round">11th Ave N</text><text x="1412" y="635" transform="rotate(48 1412 635)" text-anchor="middle" dominant-baseline="central" font-family="Liberation Sans" font-size="14" font-weight="400" letter-spacing="0.3" fill="#111a1f" stroke="#111a1f" stroke-width="2.4" stroke-linejoin="round">Arthur Ave</text><text x="1412" y="635" transform="rotate(48 1412 635)" text-anchor="middle" dominant-baseline="central" font-family="Liberation Sans" font-size="14" font-weight="400" letter-spacing="0.3" fill="#c3c8cb" stroke="#c3c8cb" stroke-width="0.45" stroke-linejoin="round">Arthur Ave</text><text x="1482" y="618.5" transform="rotate(42 1482 618.5)" text-anchor="middle" dominant-baseline="central" font-family="Liberation Sans" font-size="13" font-weight="400" letter-spacing="0.3" fill="#111a1f" stroke="#111a1f" stroke-width="2.4" stroke-linejoin="round">9th Ave N</text><text x="1482" y="618.5" transform="rotate(42 1482 618.5)" text-anchor="middle" dominant-baseline="central" font-family="Liberation Sans" font-size="13" font-weight="400" letter-spacing="0.3" fill="#c3c8cb" stroke="#c3c8cb" stroke-width="0.45" stroke-linejoin="round">9th Ave N</text><text x="1682" y="540" transform="rotate(-30 1682 540)" text-anchor="middle" dominant-baseline="central" font-family="Liberation Sans" font-size="13" font-weight="400" letter-spacing="0.3" fill="#111a1f" stroke="#111a1f" stroke-width="2.4" stroke-linejoin="round">Van Buren St</text><text x="1682" y="540" transform="rotate(-30 1682 540)" text-anchor="middle" dominant-baseline="central" font-family="Liberation Sans" font-size="13" font-weight="400" letter-spacing="0.3" fill="#c3c8cb" stroke="#c3c8cb" stroke-width="0.45" stroke-linejoin="round">Van Buren St</text><text x="1702" y="572" transform="rotate(-30 1702 572)" text-anchor="middle" dominant-baseline="central" font-family="Liberation Sans" font-size="13" font-weight="400" letter-spacing="0.3" fill="#111a1f" stroke="#111a1f" stroke-width="2.4" stroke-linejoin="round">Taylor St</text><text x="1702" y="572" transform="rotate(-30 1702 572)" text-anchor="middle" dominant-baseline="central" font-family="Liberation Sans" font-size="13" font-weight="400" letter-spacing="0.3" fill="#c3c8cb" stroke="#c3c8cb" stroke-width="0.45" stroke-linejoin="round">Taylor St</text><text x="1645.5" y="626.5" transform="rotate(66 1645.5 626.5)" text-anchor="middle" dominant-baseline="central" font-family="Liberation Sans" font-size="13" font-weight="400" letter-spacing="0.3" fill="#111a1f" stroke="#111a1f" stroke-width="2.4" stroke-linejoin="round">5th Ave N</text><text x="1645.5" y="626.5" transform="rotate(66 1645.5 626.5)" text-anchor="middle" dominant-baseline="central" font-family="Liberation Sans" font-size="13" font-weight="400" letter-spacing="0.3" fill="#c3c8cb" stroke="#c3c8cb" stroke-width="0.45" stroke-linejoin="round">5th Ave N</text><text x="1710" y="620" transform="rotate(60 1710 620)" text-anchor="middle" dominant-baseline="central" font-family="Liberation Sans" font-size="13.5" font-weight="400" letter-spacing="0.3" fill="#111a1f" stroke="#111a1f" stroke-width="2.4" stroke-linejoin="round">3rd Ave N</text><text x="1710" y="620" transform="rotate(60 1710 620)" text-anchor="middle" dominant-baseline="central" font-family="Liberation Sans" font-size="13.5" font-weight="400" letter-spacing="0.3" fill="#c3c8cb" stroke="#c3c8cb" stroke-width="0.45" stroke-linejoin="round">3rd Ave N</text><text x="1692" y="646.5" transform="rotate(66 1692 646.5)" text-anchor="middle" dominant-baseline="central" font-family="Liberation Sans" font-size="13" font-weight="400" letter-spacing="0.3" fill="#111a1f" stroke="#111a1f" stroke-width="2.4" stroke-linejoin="round">4th Ave N</text><text x="1692" y="646.5" transform="rotate(66 1692 646.5)" text-anchor="middle" dominant-baseline="central" font-family="Liberation Sans" font-size="13" font-weight="400" letter-spacing="0.3" fill="#c3c8cb" stroke="#c3c8cb" stroke-width="0.45" stroke-linejoin="round">4th Ave N</text><text x="1308" y="687.5" transform="rotate(-28 1308 687.5)" text-anchor="middle" dominant-baseline="central" font-family="Liberation Sans" font-size="13.5" font-weight="400" letter-spacing="0.3" fill="#111a1f" stroke="#111a1f" stroke-width="2.4" stroke-linejoin="round">Cockrill St</text><text x="1308" y="687.5" transform="rotate(-28 1308 687.5)" text-anchor="middle" dominant-baseline="central" font-family="Liberation Sans" font-size="13.5" font-weight="400" letter-spacing="0.3" fill="#c3c8cb" stroke="#c3c8cb" stroke-width="0.45" stroke-linejoin="round">Cockrill St</text><text x="1303" y="772" transform="rotate(-15 1303 772)" text-anchor="middle" dominant-baseline="central" font-family="Liberation Sans" font-size="13.5" font-weight="400" letter-spacing="0.3" fill="#111a1f" stroke="#111a1f" stroke-width="2.4" stroke-linejoin="round">Heiman St</text><text x="1303" y="772" transform="rotate(-15 1303 772)" text-anchor="middle" dominant-baseline="central" font-family="Liberation Sans" font-size="13.5" font-weight="400" letter-spacing="0.3" fill="#c3c8cb" stroke="#c3c8cb" stroke-width="0.45" stroke-linejoin="round">Heiman St</text><text x="1540" y="807" transform="rotate(62 1540 807)" text-anchor="middle" dominant-baseline="central" font-family="Liberation Sans" font-size="13" font-weight="400" letter-spacing="0.3" fill="#111a1f" stroke="#111a1f" stroke-width="2.4" stroke-linejoin="round">Warren St</text><text x="1540" y="807" transform="rotate(62 1540 807)" text-anchor="middle" dominant-baseline="central" font-family="Liberation Sans" font-size="13" font-weight="400" letter-spacing="0.3" fill="#c3c8cb" stroke="#c3c8cb" stroke-width="0.45" stroke-linejoin="round">Warren St</text><text x="1533" y="848" transform="rotate(62 1533 848)" text-anchor="middle" dominant-baseline="central" font-family="Liberation Sans" font-size="13" font-weight="400" letter-spacing="0.3" fill="#111a1f" stroke="#111a1f" stroke-width="2.4" stroke-linejoin="round">11th Ave N</text><text x="1533" y="848" transform="rotate(62 1533 848)" text-anchor="middle" dominant-baseline="central" font-family="Liberation Sans" font-size="13" font-weight="400" letter-spacing="0.3" fill="#c3c8cb" stroke="#c3c8cb" stroke-width="0.45" stroke-linejoin="round">11th Ave N</text><text x="1434" y="850" transform="rotate(62 1434 850)" text-anchor="middle" dominant-baseline="central" font-family="Liberation Sans" font-size="13" font-weight="400" letter-spacing="0.3" fill="#111a1f" stroke="#111a1f" stroke-width="2.4" stroke-linejoin="round">14th Ave N</text><text x="1434" y="850" transform="rotate(62 1434 850)" text-anchor="middle" dominant-baseline="central" font-family="Liberation Sans" font-size="13" font-weight="400" letter-spacing="0.3" fill="#c3c8cb" stroke="#c3c8cb" stroke-width="0.45" stroke-linejoin="round">14th Ave N</text><text x="1490" y="858" transform="rotate(62 1490 858)" text-anchor="middle" dominant-baseline="central" font-family="Liberation Sans" font-size="13" font-weight="400" letter-spacing="0.3" fill="#111a1f" stroke="#111a1f" stroke-width="2.4" stroke-linejoin="round">12th Ave N</text><text x="1490" y="858" transform="rotate(62 1490 858)" text-anchor="middle" dominant-baseline="central" font-family="Liberation Sans" font-size="13" font-weight="400" letter-spacing="0.3" fill="#c3c8cb" stroke="#c3c8cb" stroke-width="0.45" stroke-linejoin="round">12th Ave N</text><text x="1698" y="780.5" transform="rotate(62 1698 780.5)" text-anchor="middle" dominant-baseline="central" font-family="Liberation Sans" font-size="13" font-weight="400" letter-spacing="0.3" fill="#111a1f" stroke="#111a1f" stroke-width="2.4" stroke-linejoin="round">6th Ave N</text><text x="1698" y="780.5" transform="rotate(62 1698 780.5)" text-anchor="middle" dominant-baseline="central" font-family="Liberation Sans" font-size="13" font-weight="400" letter-spacing="0.3" fill="#c3c8cb" stroke="#c3c8cb" stroke-width="0.45" stroke-linejoin="round">6th Ave N</text><text x="2003" y="390" transform="rotate(-80 2003 390)" text-anchor="middle" dominant-baseline="central" font-family="Liberation Sans" font-size="13" font-weight="400" letter-spacing="0.3" fill="#111a1f" stroke="#111a1f" stroke-width="2.4" stroke-linejoin="round">Joseph Ave</text><text x="2003" y="390" transform="rotate(-80 2003 390)" text-anchor="middle" dominant-baseline="central" font-family="Liberation Sans" font-size="13" font-weight="400" letter-spacing="0.3" fill="#c3c8cb" stroke="#c3c8cb" stroke-width="0.45" stroke-linejoin="round">Joseph Ave</text><text x="1284" y="554" transform="rotate(-5 1284 554)" text-anchor="middle" dominant-baseline="central" font-family="Liberation Sans" font-size="13.5" font-weight="400" letter-spacing="0.3" fill="#111a1f" stroke="#111a1f" stroke-width="2.4" stroke-linejoin="round">Buchanan St</text><text x="1284" y="554" transform="rotate(-5 1284 554)" text-anchor="middle" dominant-baseline="central" font-family="Liberation Sans" font-size="13.5" font-weight="400" letter-spacing="0.3" fill="#c3c8cb" stroke="#c3c8cb" stroke-width="0.45" stroke-linejoin="round">Buchanan St</text><text x="1290" y="635" transform="rotate(58 1290 635)" text-anchor="middle" dominant-baseline="central" font-family="Liberation Sans" font-size="13" font-weight="400" letter-spacing="0.3" fill="#111a1f" stroke="#111a1f" stroke-width="2.4" stroke-linejoin="round">Ave N</text><text x="1290" y="635" transform="rotate(58 1290 635)" text-anchor="middle" dominant-baseline="central" font-family="Liberation Sans" font-size="13" font-weight="400" letter-spacing="0.3" fill="#c3c8cb" stroke="#c3c8cb" stroke-width="0.45" stroke-linejoin="round">Ave N</text><text x="1806" y="515.7" transform="rotate(80 1806 515.7)" text-anchor="middle" dominant-baseline="central" font-family="Liberation Sans" font-size="14" letter-spacing="0.3" fill="#8fa4b5">Cumberland River</text><text x="2001" y="842" transform="rotate(-22 2001 842)" text-anchor="middle" dominant-baseline="central" font-family="Liberation Sans" font-size="13.5" font-weight="400" letter-spacing="0.3" fill="#111a1f" stroke="#111a1f" stroke-width="2.4" stroke-linejoin="round">Woodland St</text><text x="2001" y="842" transform="rotate(-22 2001 842)" text-anchor="middle" dominant-baseline="central" font-family="Liberation Sans" font-size="13.5" font-weight="400" letter-spacing="0.3" fill="#c3c8cb" stroke="#c3c8cb" stroke-width="0.45" stroke-linejoin="round">Woodland St</text><text x="1282" y="411" transform="rotate(-8 1282 411)" text-anchor="middle" dominant-baseline="central" font-family="Liberation Sans" font-size="13.5" font-weight="400" letter-spacing="0.3" fill="#111a1f" stroke="#111a1f" stroke-width="2.4" stroke-linejoin="round">St</text><text x="1282" y="411" transform="rotate(-8 1282 411)" text-anchor="middle" dominant-baseline="central" font-family="Liberation Sans" font-size="13.5" font-weight="400" letter-spacing="0.3" fill="#c3c8cb" stroke="#c3c8cb" stroke-width="0.45" stroke-linejoin="round">St</text><text x="1279" y="493" transform="rotate(0 1279 493)" text-anchor="middle" dominant-baseline="central" font-family="Liberation Sans" font-size="21" font-weight="700" letter-spacing="0.3" fill="#111a1f" stroke="#111a1f" stroke-width="2.4" stroke-linejoin="round">e</text><text x="1279" y="493" transform="rotate(0 1279 493)" text-anchor="middle" dominant-baseline="central" font-family="Liberation Sans" font-size="21" font-weight="700" letter-spacing="0.3" fill="#c3c8cb" stroke="#c3c8cb" stroke-width="0.45" stroke-linejoin="round">e</text><text x="2012" y="530" transform="rotate(90 2012 530)" text-anchor="middle" dominant-baseline="central" font-family="Liberation Sans" font-size="13" font-weight="400" letter-spacing="0.3" fill="#111a1f" stroke="#111a1f" stroke-width="2.4" stroke-linejoin="round">N 2nd St</text><text x="2012" y="530" transform="rotate(90 2012 530)" text-anchor="middle" dominant-baseline="central" font-family="Liberation Sans" font-size="13" font-weight="400" letter-spacing="0.3" fill="#c3c8cb" stroke="#c3c8cb" stroke-width="0.45" stroke-linejoin="round">N 2nd St</text><text x="1922" y="858" transform="rotate(70 1922 858)" text-anchor="middle" dominant-baseline="central" font-family="Liberation Sans" font-size="14" fill="#8fa4b5">Cumb</text><path d="M1407.8 235.5 Q1411.8 237.5 1414.8 235.0 Q1421.8 238.5 1428.8 235.0 Q1431.8 237.5 1435.8 235.5 Q1438.8 239.5 1436.8 243.5 Q1438.8 252.5 1430.8 254.0 Q1424.8 254.5 1421.8 256.5 Q1418.8 254.5 1412.8 254.0 Q1404.8 252.5 1406.8 243.5 Q1404.8 239.5 1407.8 235.5 Z" fill="#fff" stroke="#d8dadb" stroke-width="0.8"/><text x="1421.8" y="246.0" text-anchor="middle" dominant-baseline="central" font-family="Liberation Sans" font-size="12.5" font-weight="700" fill="#8a8d90" letter-spacing="0.6">41A</text><path d="M1488.8 532.7 Q1492.8 534.7 1495.8 532.2 Q1502.8 535.7 1509.8 532.2 Q1512.8 534.7 1516.8 532.7 Q1519.8 536.7 1517.8 540.7 Q1519.8 549.7 1511.8 551.2 Q1505.8 551.7 1502.8 553.7 Q1499.8 551.7 1493.8 551.2 Q1485.8 549.7 1487.8 540.7 Q1485.8 536.7 1488.8 532.7 Z" fill="#fff" stroke="#d8dadb" stroke-width="0.8"/><text x="1502.8" y="543.2" text-anchor="middle" dominant-baseline="central" font-family="Liberation Sans" font-size="12.5" font-weight="700" fill="#8a8d90" letter-spacing="0.6">41A</text><path d="M1972.5 293.3 Q1976.5 295.3 1979.5 292.8 Q1987 296.3 1994.5 292.8 Q1997.5 295.3 2001.5 293.3 Q2004.5 297.3 2002.5 301.3 Q2004.5 310.3 1996.5 311.8 Q1990 312.3 1987 314.3 Q1984 312.3 1977.5 311.8 Q1969.5 310.3 1971.5 301.3 Q1969.5 297.3 1972.5 293.3 Z" fill="#fff" stroke="#d8dadb" stroke-width="0.8"/><text x="1987" y="303.8" text-anchor="middle" dominant-baseline="central" font-family="Liberation Sans" font-size="12.5" font-weight="700" fill="#8a8d90" letter-spacing="0.6">31W</text><path d="M1468.0 419.3 Q1471.5 418.8 1473.5 416.8 Q1476.5 419.3 1479 415.8 Q1481.5 419.3 1484.5 416.8 Q1486.5 418.8 1490.0 419.3 Q1492.0 428.3 1488.5 433.3 Q1485 438.8 1479 441.3 Q1473 438.8 1469.5 433.3 Q1466.0 428.3 1468.0 419.3 Z" fill="#9c9c9c" stroke="#fff" stroke-width="1.6"/><line x1="1467.5" y1="422.8" x2="1490.5" y2="422.8" stroke="#fff" stroke-width="1.3"/><text x="1479" y="431.8" text-anchor="middle" dominant-baseline="central" font-family="Liberation Sans" font-size="12.5" font-weight="700" fill="#f4f4f4" letter-spacing="0.5">65</text><path d="M1406.5 575.0 Q1410.0 574.5 1412.0 572.5 Q1415.0 575.0 1417.5 571.5 Q1420.0 575.0 1423.0 572.5 Q1425.0 574.5 1428.5 575.0 Q1430.5 584.0 1427.0 589.0 Q1423.5 594.5 1417.5 597.0 Q1411.5 594.5 1408.0 589.0 Q1404.5 584.0 1406.5 575.0 Z" fill="#9c9c9c" stroke="#fff" stroke-width="1.6"/><line x1="1406.0" y1="578.5" x2="1429.0" y2="578.5" stroke="#fff" stroke-width="1.3"/><text x="1417.5" y="587.5" text-anchor="middle" dominant-baseline="central" font-family="Liberation Sans" font-size="12.5" font-weight="700" fill="#f4f4f4" letter-spacing="0.5">65</text><path d="M1396.5 729.6 Q1400.0 729.1 1402.0 727.1 Q1405.0 729.6 1407.5 726.1 Q1410.0 729.6 1413.0 727.1 Q1415.0 729.1 1418.5 729.6 Q1420.5 738.6 1417.0 743.6 Q1413.5 749.1 1407.5 751.6 Q1401.5 749.1 1398.0 743.6 Q1394.5 738.6 1396.5 729.6 Z" fill="#9c9c9c" stroke="#fff" stroke-width="1.6"/><line x1="1396.0" y1="733.1" x2="1419.0" y2="733.1" stroke="#fff" stroke-width="1.3"/><text x="1407.5" y="742.1" text-anchor="middle" dominant-baseline="central" font-family="Liberation Sans" font-size="12.5" font-weight="700" fill="#f4f4f4" letter-spacing="0.5">40</text><path d="M1434.6 740.1 Q1438.1 739.6 1440.1 737.6 Q1443.1 740.1 1445.6 736.6 Q1448.1 740.1 1451.1 737.6 Q1453.1 739.6 1456.6 740.1 Q1458.6 749.1 1455.1 754.1 Q1451.6 759.6 1445.6 762.1 Q1439.6 759.6 1436.1 754.1 Q1432.6 749.1 1434.6 740.1 Z" fill="#9c9c9c" stroke="#fff" stroke-width="1.6"/><line x1="1434.1" y1="743.6" x2="1457.1" y2="743.6" stroke="#fff" stroke-width="1.3"/><text x="1445.6" y="752.6" text-anchor="middle" dominant-baseline="central" font-family="Liberation Sans" font-size="12.5" font-weight="700" fill="#f4f4f4" letter-spacing="0.5">65</text><path d="M1936.4 487.4 Q1939.9 486.9 1941.9 484.9 Q1944.9 487.4 1947.4 483.9 Q1949.9 487.4 1952.9 484.9 Q1954.9 486.9 1958.4 487.4 Q1960.4 496.4 1956.9 501.4 Q1953.4 506.9 1947.4 509.4 Q1941.4 506.9 1937.9 501.4 Q1934.4 496.4 1936.4 487.4 Z" fill="#9c9c9c" stroke="#fff" stroke-width="1.6"/><line x1="1935.9" y1="490.9" x2="1958.9" y2="490.9" stroke="#fff" stroke-width="1.3"/><text x="1947.4" y="499.9" text-anchor="middle" dominant-baseline="central" font-family="Liberation Sans" font-size="12.5" font-weight="700" fill="#f4f4f4" letter-spacing="0.5">24</text><path d="M1457.8 811.5 Q1464.8 811.5 1468.8 808.5 Q1480.8 812.5 1492.8 808.5 Q1496.8 811.5 1503.8 811.5 Q1505.8 821.5 1496.8 826.5 Q1488.8 829.5 1480.8 833.5 Q1472.8 829.5 1464.8 826.5 Q1455.8 821.5 1457.8 811.5 Z" fill="#9c9c9c" stroke="#fff" stroke-width="1.6"/><line x1="1457.8" y1="815.0" x2="1503.8" y2="815.0" stroke="#fff" stroke-width="1.3"/><text x="1480.8" y="824.0" text-anchor="middle" dominant-baseline="central" font-family="Liberation Sans" font-size="12.5" font-weight="700" fill="#f4f4f4" letter-spacing="0.5">40·65</text></svg>
<div style="position:absolute;left:1276px;top:172px;width:739px;height:698px;overflow:hidden;"><div style="position:absolute;left:541.2px;top:401.9px;width:260px;height:229.3px;background:#fff;box-shadow:0 1px 3px rgba(0,0,0,0.35);"></div><div style="position:absolute;left:541.2px;top:401.9px;width:260px;height:60.8px;background:#efefef;"></div><div style="position:absolute;left:694.5px;top:631.1px;width:0;height:0;border-left:8.5px solid transparent;border-right:8.5px solid transparent;border-top:9px solid #fff;"></div><div style="position:absolute;left:558.0px;top:422.7px;font-size:17px;line-height:17px;color:#171c1f;font-weight:700;white-space:nowrap;">US 31E, Ellinton Parkway</div><div style="position:absolute;left:558.0px;top:473.1px;font-size:18px;line-height:18px;color:#1f2427;font-weight:400;white-space:nowrap;">Change in Trip Volume</div><div style="position:absolute;left:558px;top:503px;width:200px;height:1.5px;background:#d3d5d6"></div><div style="position:absolute;left:558.0px;top:516.1px;font-size:18px;line-height:18px;color:#1f2427;font-weight:400;white-space:nowrap;">Scenario</div><div style="position:absolute;left:558.0px;top:549.9px;font-size:18px;line-height:18px;color:#1f2427;font-weight:400;white-space:nowrap;">Baseline</div><div style="position:absolute;left:558px;top:579.8px;width:200px;height:1.5px;background:#d3d5d6"></div><div style="position:absolute;left:623.5px;top:592.9px;font-size:18px;line-height:18px;color:#5a6064;font-weight:400;white-space:nowrap;">Click to view details</div><svg style="position:absolute;left:529px;top:544px" width="22" height="30" viewBox="0 0 22 30"><path d="M3 2.5 V23 L8 18.5 L11.5 26 L14.5 24.7 L11 17.5 H17.5 Z" fill="#111" stroke="#fff" stroke-width="1.4" stroke-linejoin="round"/></svg></div><div style="position:absolute;left:1275.2px;top:171.5px;width:740.8px;height:699px;box-sizing:border-box;border:1px solid #b9bdbf;pointer-events:none;"></div>
<div style="position:absolute;background:#fff;border-radius:4px;box-shadow:0 0 0 1px rgba(0,0,0,0.08);left:1276px;top:188.7px;width:59px;height:42px;border-radius:0 4px 4px 0;"></div><div style="position:absolute;background:#fff;border-radius:4px;box-shadow:0 0 0 1px rgba(0,0,0,0.08);left:1290.2px;top:238.5px;width:45px;height:44.5px;"></div><div style="position:absolute;background:#fff;border-radius:4px;box-shadow:0 0 0 1px rgba(0,0,0,0.08);left:1290.2px;top:289.7px;width:45px;height:87.5px;"></div><div style="position:absolute;left:1290.2px;top:331.6px;width:45px;height:1.3px;background:#cfd2d3"></div><div style="position:absolute;background:#fff;border-radius:4px;box-shadow:0 0 0 1px rgba(0,0,0,0.08);left:1290.2px;top:383.5px;width:45px;height:45.2px;"></div><div style="position:absolute;background:#fff;border-radius:4px;box-shadow:0 0 0 1px rgba(0,0,0,0.08);left:1290.2px;top:435.5px;width:45px;height:44px;"></div><svg style="position:absolute;left:1276px;top:185px" width="60" height="300" viewBox="1276 185 60 300"><path d="M1291 204.3 L1284.6 209.7 L1290.8 215.3" fill="none" stroke="#555c60" stroke-width="1.8"/><path d="M1314.2 198.4 L1324.4 206.3 L1314.2 213.9 L1304 206.3 Z" fill="#555c60"/><path d="M1304.3 212.4 L1314.2 219.8 L1324.1 212.4" fill="none" stroke="#555c60" stroke-width="2"/><circle cx="1309.7" cy="257.8" r="6.6" fill="none" stroke="#555c60" stroke-width="1.9"/><path d="M1314.6 263 L1321.7 270" stroke="#555c60" stroke-width="2" /><path d="M1304.7 312.1 H1320.9 M1312.8 303.9 V320.9" stroke="#555c60" stroke-width="2.2"/><path d="M1304.7 354.3 H1320.9" stroke="#555c60" stroke-width="2.2"/><path d="M1305.8 404 V399.3 H1310.5 M1315.1 399.3 H1319.8 V404 M1319.8 408.6 V413.2 H1315.1 M1310.5 413.2 H1305.8 V408.6" fill="none" stroke="#555c60" stroke-width="2.2"/><path d="M1302 449.7 L1308.6 446.5 V464.6 L1302 467.8 Z M1316.4 449.7 L1323.1 446.5 V464.6 L1316.4 467.8 Z" fill="#555c60"/><path d="M1308.6 446.5 L1316.4 449.7 V467.8 L1308.6 464.6 Z" fill="none" stroke="#555c60" stroke-width="1.3"/></svg>
</body></html>
